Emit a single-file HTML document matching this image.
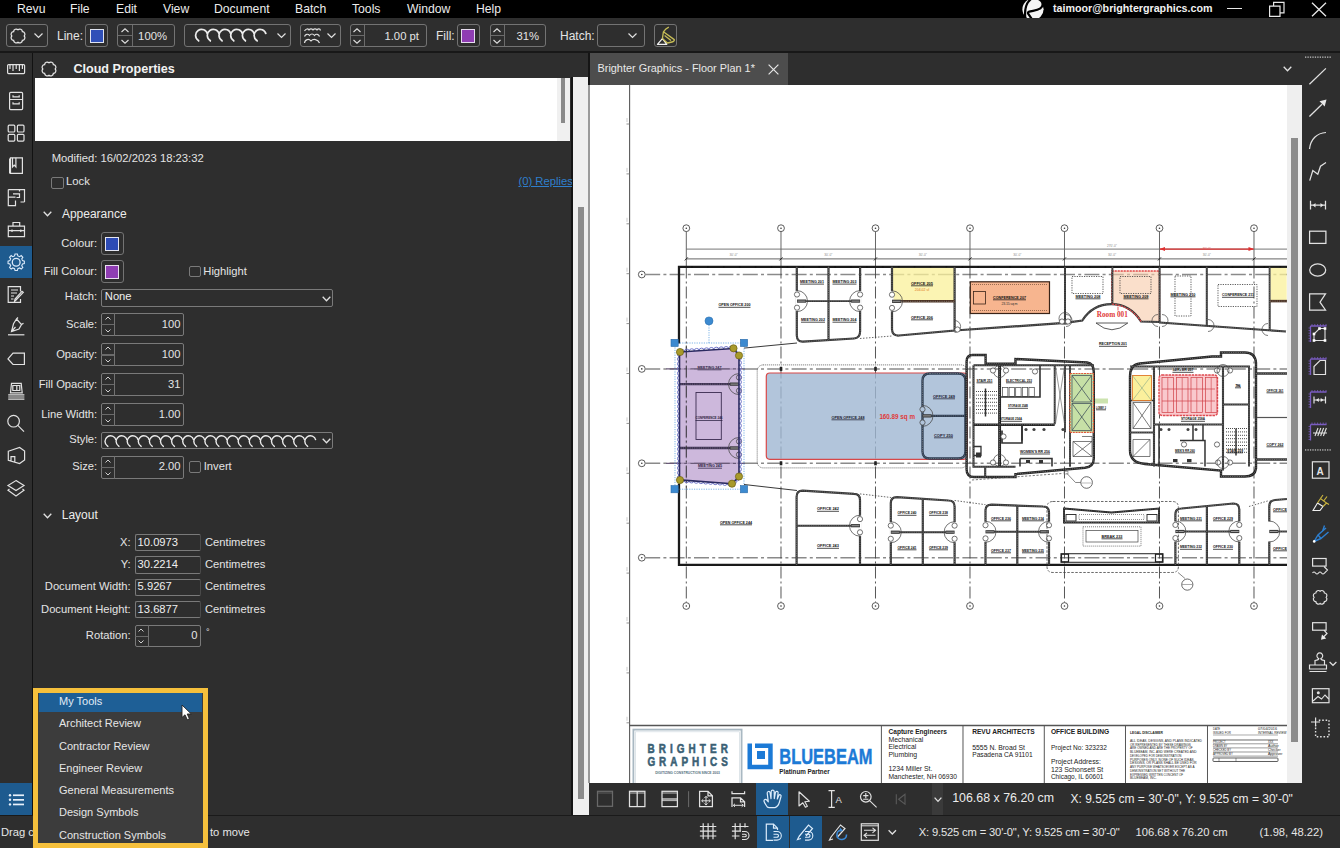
<!DOCTYPE html>
<html><head><meta charset="utf-8">
<style>
*{margin:0;padding:0;box-sizing:border-box}
html,body{width:1340px;height:848px;overflow:hidden;background:#2e2e2e;font-family:"Liberation Sans",sans-serif;color:#e6e6e6}
.a{position:absolute}
.t{position:absolute;white-space:nowrap;line-height:1}
svg{position:absolute;overflow:visible}
.btn{position:absolute;border:1.4px solid #737373;border-radius:3px}
.fld{position:absolute;border:1.4px solid #7a7a7a;border-radius:2px}
.cb{position:absolute;width:12px;height:12px;border:1.3px solid #7a7a7a;border-radius:2px}
.lbl{position:absolute;white-space:nowrap;line-height:1;font-size:11.3px;color:#e4e4e4;text-align:right}
</style></head><body>
<!-- menu bar -->
<div class="a" style="left:0;top:0;width:1340px;height:18px;background:#000"></div>
<div id="menu" style="font-size:12.2px;color:#ececec">
<span class="t" style="left:17px;top:3px">Revu</span>
<span class="t" style="left:70px;top:3px">File</span>
<span class="t" style="left:116px;top:3px">Edit</span>
<span class="t" style="left:163px;top:3px">View</span>
<span class="t" style="left:214px;top:3px">Document</span>
<span class="t" style="left:295px;top:3px">Batch</span>
<span class="t" style="left:352px;top:3px">Tools</span>
<span class="t" style="left:407px;top:3px">Window</span>
<span class="t" style="left:476px;top:3px">Help</span>
</div>
<svg style="left:1018px;top:0px" width="32" height="20" viewBox="0 0 32 20"><clipPath id="lc"><rect x="0" y="0" width="32" height="18.5"/></clipPath><g clip-path="url(#lc)"><circle cx="15" cy="9.3" r="10.6" fill="#f4f4f4"/><path d="M13 -1 C8 3 6 9 7.5 19.5" fill="none" stroke="#000" stroke-width="2.2"/><path d="M24.5 2.5 C25.5 8 21 10 15 10.8 C11 11.3 9.5 12 10 13.5 L14.5 20" fill="none" stroke="#000" stroke-width="2.2"/></g></svg>
<span class="t" style="left:1053px;top:3.2px;font-size:10.7px;font-weight:bold;color:#f0f0f0">taimoor@brightergraphics.com</span>
<div class="a" style="left:1227px;top:8.2px;width:15px;height:1.3px;background:#e8e8e8"></div>
<svg style="left:1268px;top:0px" width="18" height="18" viewBox="0 0 18 18"><path d="M1.6 6.2 H12 V16.4 H1.6 Z M5.6 6.2 V2.4 H16 V12.8 H12" fill="none" stroke="#e8e8e8" stroke-width="1.2"/></svg>
<svg style="left:1311px;top:2px" width="16" height="15" viewBox="0 0 16 15"><path d="M1 0.8 L15 14.2 M15 0.8 L1 14.2" fill="none" stroke="#e8e8e8" stroke-width="1.3"/></svg>
<!-- toolbar -->
<div class="a" style="left:0;top:18px;width:1340px;height:33px;background:#2e2e2e"></div>
<div class="a" style="left:0;top:51px;width:1340px;height:2px;background:#181818"></div>
<div id="tb">
<div class="btn" style="left:6px;top:24px;width:42px;height:23px"></div>
<svg style="left:9px;top:27px" width="18" height="18" viewBox="0 0 18 18"><path d="M9.00 2.80 A2.6 2.6 0 0 1 13.38 4.62 A2.6 2.6 0 0 1 15.20 9.00 A2.6 2.6 0 0 1 13.38 13.38 A2.6 2.6 0 0 1 9.00 15.20 A2.6 2.6 0 0 1 4.62 13.38 A2.6 2.6 0 0 1 2.80 9.00 A2.6 2.6 0 0 1 4.62 4.62 A2.6 2.6 0 0 1 9.00 2.80 Z" fill="none" stroke="#e8e8e8" stroke-width="1.2"/></svg>
<svg style="left:34px;top:33px" width="9" height="5" viewBox="0 0 9 5"><path d="M0.5 0.5 L4.5 4.5 L8.5 0.5" fill="none" stroke="#e0e0e0" stroke-width="1.2"/></svg>
<span class="t" style="left:57px;top:30px;font-size:12px;color:#e4e4e4">Line:</span>
<div class="btn" style="left:85px;top:24px;width:23px;height:23px"></div>
<div class="a" style="left:90px;top:29px;width:14px;height:14px;background:#2f4fb8;border:1.5px solid #dfe3f0"></div>
<div class="btn" style="left:117px;top:24px;width:58px;height:23px"></div>
<div class="a" style="left:132px;top:25px;width:1.3px;height:21px;background:#6b6b6b"></div>
<div class="a" style="left:118px;top:35px;width:14px;height:1.3px;background:#6b6b6b"></div>
<svg style="left:121px;top:28px" width="8" height="5" viewBox="0 0 8 5"><path d="M0.5 4 L4 0.8 L7.5 4" fill="none" stroke="#e0e0e0" stroke-width="1.1"/></svg>
<svg style="left:121px;top:38.5px" width="8" height="5" viewBox="0 0 8 5"><path d="M0.5 1 L4 4.2 L7.5 1" fill="none" stroke="#e0e0e0" stroke-width="1.1"/></svg>
<span class="t" style="right:1173px;top:30.5px;font-size:11.3px;color:#e4e4e4">100%</span>
<div class="btn" style="left:184px;top:24px;width:107px;height:23px"></div>
<svg style="left:195px;top:28px" width="72" height="14" viewBox="0 0 72 14"><path d="M4.32 13.30 Q3.42 13.00 3.42 12.49 A6.00 6.00 0 1 1 12.47 6.15 M16.02 13.30 Q15.12 13.00 15.12 12.49 A6.00 6.00 0 1 1 24.17 6.15 M27.72 13.30 Q26.82 13.00 26.82 12.49 A6.00 6.00 0 1 1 35.87 6.15 M39.42 13.30 Q38.52 13.00 38.52 12.49 A6.00 6.00 0 1 1 47.57 6.15 M51.12 13.30 Q50.22 13.00 50.22 12.49 A6.00 6.00 0 1 1 59.27 6.15 M62.82 13.30 Q61.92 13.00 61.92 12.49 A6.00 6.00 0 1 1 70.97 6.15 " fill="none" stroke="#ececec" stroke-width="1.7"/></svg>
<svg style="left:277px;top:33px" width="9" height="5" viewBox="0 0 9 5"><path d="M0.5 0.5 L4.5 4.5 L8.5 0.5" fill="none" stroke="#e0e0e0" stroke-width="1.2"/></svg>
<div class="btn" style="left:300px;top:24px;width:41px;height:23px"></div>
<svg style="left:303px;top:27px" width="18" height="17" viewBox="0 0 18 17"><path d="M1.5 4 C3 1.5 5 1.5 6 3 C7 1.5 9 1.5 10 3 C11 1.5 13 1.5 14 3 C15 1.5 17 1.5 17.5 3.5 M1.5 9.5 C2.5 7 5 6.5 6.5 8.5 C8 6.5 10 6.5 11.5 8.5 C13 6.5 15.5 7 16.5 9.5 M1.5 16 C2 12 6 11.5 8 14 C10 11.5 15 12 16.5 16" fill="none" stroke="#e0e0e0" stroke-width="1.2"/></svg>
<svg style="left:327px;top:33px" width="9" height="5" viewBox="0 0 9 5"><path d="M0.5 0.5 L4.5 4.5 L8.5 0.5" fill="none" stroke="#e0e0e0" stroke-width="1.2"/></svg>
<div class="btn" style="left:350px;top:24px;width:77px;height:23px"></div>
<div class="a" style="left:364px;top:25px;width:1.3px;height:21px;background:#6b6b6b"></div>
<div class="a" style="left:351px;top:35px;width:13px;height:1.3px;background:#6b6b6b"></div>
<svg style="left:353px;top:28px" width="8" height="5" viewBox="0 0 8 5"><path d="M0.5 4 L4 0.8 L7.5 4" fill="none" stroke="#e0e0e0" stroke-width="1.1"/></svg>
<svg style="left:353px;top:38.5px" width="8" height="5" viewBox="0 0 8 5"><path d="M0.5 1 L4 4.2 L7.5 1" fill="none" stroke="#e0e0e0" stroke-width="1.1"/></svg>
<span class="t" style="right:921px;top:30.5px;font-size:11.3px;color:#e4e4e4">1.00 pt</span>
<span class="t" style="left:436px;top:30px;font-size:12px;color:#e4e4e4">Fill:</span>
<div class="btn" style="left:457px;top:24px;width:23px;height:23px"></div>
<div class="a" style="left:461px;top:29px;width:14px;height:14px;background:#8f3db3;border:1.5px solid #e6dcef"></div>
<div class="btn" style="left:490px;top:24px;width:56px;height:23px"></div>
<div class="a" style="left:504px;top:25px;width:1.3px;height:21px;background:#6b6b6b"></div>
<div class="a" style="left:491px;top:35px;width:13px;height:1.3px;background:#6b6b6b"></div>
<svg style="left:493px;top:28px" width="8" height="5" viewBox="0 0 8 5"><path d="M0.5 4 L4 0.8 L7.5 4" fill="none" stroke="#e0e0e0" stroke-width="1.1"/></svg>
<svg style="left:493px;top:38.5px" width="8" height="5" viewBox="0 0 8 5"><path d="M0.5 1 L4 4.2 L7.5 1" fill="none" stroke="#e0e0e0" stroke-width="1.1"/></svg>
<span class="t" style="right:801px;top:30.5px;font-size:11.3px;color:#e4e4e4">31%</span>
<span class="t" style="left:560px;top:30px;font-size:12px;color:#e4e4e4">Hatch:</span>
<div class="btn" style="left:597px;top:24px;width:48px;height:23px"></div>
<svg style="left:628px;top:33px" width="9" height="5" viewBox="0 0 9 5"><path d="M0.5 0.5 L4.5 4.5 L8.5 0.5" fill="none" stroke="#e0e0e0" stroke-width="1.2"/></svg>
<div class="btn" style="left:654px;top:24px;width:23px;height:23px"></div>
<svg style="left:656px;top:25px" width="20" height="20" viewBox="0 0 20 20"><path d="M1.4 19.3 L6.4 13.6 L10.8 19.3 Z" fill="none" stroke="#f2f2f2" stroke-width="1.2" stroke-linejoin="round"/><path d="M6.4 13.6 L7.4 6.8 Q9.6 3.6 12.8 2.2 M7.4 6.8 L18.3 14.6 Q18.5 16.6 16 17 L11.4 18 L6.4 13.6 M8.6 10.6 L15 15.6" fill="none" stroke="#c7bd56" stroke-width="1.3" stroke-linejoin="round"/></svg>
</div>

<!-- left strip -->
<div class="a" style="left:0;top:53px;width:32px;height:763px;background:#2e2e2e"></div>
<div class="a" style="left:32px;top:53px;width:1px;height:763px;background:#121212"></div>
<div class="a" style="left:0;top:246px;width:32px;height:32px;background:#1e5b8f"></div>
<div class="a" style="left:0;top:783px;width:32px;height:32px;background:#1e5b8f"></div>
<svg style="left:0;top:0" width="32" height="848" viewBox="0 0 32 848">
<g fill="none" stroke="#e2e2e2" stroke-width="1.2">
<rect x="7.6" y="64.6" width="17" height="9" rx="1"/>
<path d="M10 64.6 V69 M13 64.6 V71 M16.2 64.6 V69 M19.4 64.6 V71 M22.4 64.6 V69"/>
<rect x="9.6" y="92.4" width="13" height="17.2" rx="1"/>
<path d="M9.6 99.5 H22.6 M13 95.3 V96.8 H19.2 V95.3 M13 102.3 V103.8 H19.2 V102.3"/>
<rect x="8.2" y="125.2" width="6.6" height="6.8" rx="1"/><rect x="17.4" y="125.2" width="6.6" height="6.8" rx="1"/>
<rect x="8.2" y="134.3" width="6.6" height="6.8" rx="1"/><rect x="17.4" y="134.3" width="6.6" height="6.8" rx="1"/>
<path d="M10.5 157.8 H22.4 V173.4 H10.5 Z M9.6 158.5 V173.4"/>
<path d="M12.5 157.8 V167 L14.2 165.2 L15.9 167 V157.8"/>
<path d="M8.3 189.6 H24.5 V202 M20.5 202 H24.5 M8.3 189.6 V205.7 H15.5 V200.5 M15.5 197.2 H8.3 M13 193.8 H19.5 V197.5 H16.5 M19.5 189.6 V191.5"/>
<path d="M8.3 226.2 H24.5 V236.6 H8.3 Z M8.3 230.6 H24.5 M13 226.2 V222.5 H19.7 V226.2 M12 229.5 V232 M20.8 229.5 V232"/>
<path d="M20.5 291.5 V286.6 H8.2 V302.3 H20.5 V299 M11 290 H18 M11 293 H17 M11 296 H14 M11 299 H13.5"/>
<path d="M23.3 292.3 L16 300 L14.5 301.5 L15 299 L22 291.3 Z"/>
<path d="M8 334.8 H24.4"/>
<path d="M16.5 319 L21.5 324.5 L19 329 L11.5 331.5 L13.5 323.8 Z M16.5 319 L18 317.5 M21.5 324.5 L23.5 323.2 M11.5 331.5 L15.5 327"/>
<path d="M8 358.9 L13 353.2 H24.4 V364.5 H13 Z"/>
<path d="M10.5 392.8 L11.5 383.4 H21.2 L22.2 392.8 Z M12.8 385.5 H19.8 V390.5 H12.8 Z M16.8 385.5 V390.5 M8.2 394.8 H24.4 M8.2 397 H24.4 M8.2 399.2 H24.4"/>
<circle cx="13.6" cy="421.2" r="5.8"/><path d="M17.8 425.4 L24 431.6"/>
<path d="M8.3 451.2 L19.6 447.5 L24.6 451 V460 L19.6 463.6 L8.3 460.2 Z M11 460.6 V456.7 H14.8 V461.6"/>
<path d="M16 480.6 L24 485.6 L16 490.6 L8 485.6 Z M9.5 489 L8 490.2 L16 495.9 L24 490.2 L22.5 489"/>
</g>
<g fill="none" stroke="#dbeafa" stroke-width="1.3">
<path d="M14.8 254 H17.6 L18.2 256.2 L20.3 257.1 L22.2 255.8 L24.1 257.8 L22.8 259.7 L23.7 261.8 L25.9 262.4 V265.2 L23.7 265.8 L22.8 267.9 L24.1 269.8 L22.2 271.8 L20.3 270.5 L18.2 271.4 L17.6 273.6 H14.8 L14.2 271.4 L12.1 270.5 L10.2 271.8 L8.3 269.8 L9.6 267.9 L8.7 265.8 L6.5 265.2 V262.4 L8.7 261.8 L9.6 259.7 L8.3 257.8 L10.2 255.8 L12.1 257.1 L14.2 256.2 Z" transform="translate(16.2,262.3) scale(0.84) translate(-16.2,-263.8)"/>
<circle cx="16.2" cy="262.3" r="3.9"/>
</g>
<g fill="#e8f1fb"><circle cx="10" cy="795.2" r="1.2"/><circle cx="10" cy="799.8" r="1.2"/><circle cx="10" cy="804.4" r="1.2"/><rect x="13" y="794.4" width="11" height="1.7"/><rect x="13" y="799" width="11" height="1.7"/><rect x="13" y="803.6" width="11" height="1.7"/></g>
</svg>

<!-- panel -->
<div class="a" style="left:33px;top:53px;width:539px;height:763px;background:#2e2e2e"></div>
<div class="a" style="left:571px;top:77px;width:2px;height:739px;background:#151515"></div>

<div id="panel">
<svg style="left:39.5px;top:59.5px" width="18" height="18" viewBox="0 0 18 18"><path d="M9.00 2.80 A2.6 2.6 0 0 1 13.38 4.62 A2.6 2.6 0 0 1 15.20 9.00 A2.6 2.6 0 0 1 13.38 13.38 A2.6 2.6 0 0 1 9.00 15.20 A2.6 2.6 0 0 1 4.62 13.38 A2.6 2.6 0 0 1 2.80 9.00 A2.6 2.6 0 0 1 4.62 4.62 A2.6 2.6 0 0 1 9.00 2.80 Z" fill="none" stroke="#e8e8e8" stroke-width="1.2"/></svg>
<span class="t" style="left:73.4px;top:62.93px;font-size:12.6px;color:#f2f2f2;font-weight:bold;">Cloud Properties</span>
<div class="a" style="left:35px;top:77.5px;width:522px;height:63.5px;background:#fff"></div>
<div class="a" style="left:557px;top:77.5px;width:13px;height:63.5px;background:#f0f0f0"></div>
<div class="a" style="left:561.3px;top:77.7px;width:4px;height:45.2px;background:#8a8a8a"></div>
<span class="t" style="left:51.7px;top:153.08px;font-size:11.25px;color:#e4e4e4;">Modified: 16/02/2023 18:23:32</span>
<div class="cb" style="left:51.2px;top:177px;width:12.50px;height:11.60px;"></div>
<span class="t" style="left:66px;top:176.08px;font-size:11.25px;color:#e4e4e4;">Lock</span>
<div class="a" style="left:515px;top:170px;width:57px;height:20px;overflow:hidden"><span class="t" style="left:3.4px;top:6.28px;font-size:11.25px;color:#2f7fcc;text-decoration:underline">(0) Replies</span>
</div>
<svg style="left:42.8px;top:211px" width="9" height="6" viewBox="0 0 9 6"><path d="M0.7 0.7 L4.5 4.8 L8.3 0.7" fill="none" stroke="#e0e0e0" stroke-width="1.3"/></svg>
<span class="t" style="left:61.9px;top:207.94px;font-size:12px;color:#ececec;">Appearance</span>
<span class="t" style="right:1242.80px;top:237.92px;font-size:11.2px;color:#e4e4e4;">Colour:</span>
<div class="btn" style="left:100.7px;top:232.1px;width:23.00px;height:23.00px;"></div>
<div class="a" style="left:105.3px;top:237px;width:13.7px;height:13.7px;background:#2d4bb5;border:1.4px solid #e4e6f2"></div>
<span class="t" style="right:1242.80px;top:265.62px;font-size:11.2px;color:#e4e4e4;">Fill Colour:</span>
<div class="btn" style="left:100.7px;top:260px;width:23.00px;height:23.00px;"></div>
<div class="a" style="left:105.3px;top:265px;width:13.7px;height:13.7px;background:#8f3db3;border:1.4px solid #eadff0"></div>
<div class="cb" style="left:189px;top:265.8px;width:11.80px;height:11.50px;"></div>
<span class="t" style="left:203.3px;top:265.52px;font-size:11.2px;color:#e4e4e4;">Highlight</span>
<span class="t" style="right:1242.80px;top:291.12px;font-size:11.2px;color:#e4e4e4;">Hatch:</span>
<div class="fld" style="left:101.25px;top:289.25px;width:231.25px;height:17.50px;"></div>
<span class="t" style="left:104.8px;top:291.12px;font-size:11.2px;color:#f0f0f0;">None</span>
<svg style="left:321.5px;top:295.5px" width="9" height="6" viewBox="0 0 9 6"><path d="M0.7 0.7 L4.5 4.8 L8.3 0.7" fill="none" stroke="#e0e0e0" stroke-width="1.3"/></svg>
<span class="t" style="right:1242.80px;top:318.52px;font-size:11.2px;color:#e4e4e4;">Scale:</span>
<div class="fld" style="left:101.25px;top:312.5px;width:82.50px;height:23.25px;"></div>
<div class="a" style="left:113.75px;top:312.5px;width:1.2px;height:23.25px;background:#727272"></div>
<div class="a" style="left:101.25px;top:324.1px;width:12.5px;height:1.2px;background:#6a6a6a"></div>
<svg style="left:104.5px;top:315.5px" width="6" height="4" viewBox="0 0 6 4"><path d="M0.5 3.5 L3 1 L5.5 3.5" fill="none" stroke="#cfcfcf" stroke-width="1"/></svg>
<svg style="left:104.5px;top:328.75px" width="6" height="4" viewBox="0 0 6 4"><path d="M0.5 0.5 L3 3 L5.5 0.5" fill="none" stroke="#cfcfcf" stroke-width="1"/></svg>
<span class="t" style="right:1159.50px;top:318.52px;font-size:11.2px;color:#e4e4e4;">100</span>
<span class="t" style="right:1242.80px;top:348.52px;font-size:11.2px;color:#e4e4e4;">Opacity:</span>
<div class="fld" style="left:101.25px;top:343px;width:82.50px;height:22.75px;"></div>
<div class="a" style="left:113.75px;top:343px;width:1.2px;height:22.75px;background:#727272"></div>
<div class="a" style="left:101.25px;top:354.4px;width:12.5px;height:1.2px;background:#6a6a6a"></div>
<svg style="left:104.5px;top:346px" width="6" height="4" viewBox="0 0 6 4"><path d="M0.5 3.5 L3 1 L5.5 3.5" fill="none" stroke="#cfcfcf" stroke-width="1"/></svg>
<svg style="left:104.5px;top:358.75px" width="6" height="4" viewBox="0 0 6 4"><path d="M0.5 0.5 L3 3 L5.5 0.5" fill="none" stroke="#cfcfcf" stroke-width="1"/></svg>
<span class="t" style="right:1159.50px;top:348.52px;font-size:11.2px;color:#e4e4e4;">100</span>
<span class="t" style="right:1242.80px;top:378.52px;font-size:11.2px;color:#e4e4e4;">Fill Opacity:</span>
<div class="fld" style="left:101.25px;top:372.5px;width:82.50px;height:23.00px;"></div>
<div class="a" style="left:113.75px;top:372.5px;width:1.2px;height:23.0px;background:#727272"></div>
<div class="a" style="left:101.25px;top:384.0px;width:12.5px;height:1.2px;background:#6a6a6a"></div>
<svg style="left:104.5px;top:375.5px" width="6" height="4" viewBox="0 0 6 4"><path d="M0.5 3.5 L3 1 L5.5 3.5" fill="none" stroke="#cfcfcf" stroke-width="1"/></svg>
<svg style="left:104.5px;top:388.5px" width="6" height="4" viewBox="0 0 6 4"><path d="M0.5 0.5 L3 3 L5.5 0.5" fill="none" stroke="#cfcfcf" stroke-width="1"/></svg>
<span class="t" style="right:1159.50px;top:378.52px;font-size:11.2px;color:#e4e4e4;">31</span>
<span class="t" style="right:1242.80px;top:408.52px;font-size:11.2px;color:#e4e4e4;">Line Width:</span>
<div class="fld" style="left:101.25px;top:402.5px;width:82.50px;height:23.00px;"></div>
<div class="a" style="left:113.75px;top:402.5px;width:1.2px;height:23.0px;background:#727272"></div>
<div class="a" style="left:101.25px;top:414.0px;width:12.5px;height:1.2px;background:#6a6a6a"></div>
<svg style="left:104.5px;top:405.5px" width="6" height="4" viewBox="0 0 6 4"><path d="M0.5 3.5 L3 1 L5.5 3.5" fill="none" stroke="#cfcfcf" stroke-width="1"/></svg>
<svg style="left:104.5px;top:418.5px" width="6" height="4" viewBox="0 0 6 4"><path d="M0.5 0.5 L3 3 L5.5 0.5" fill="none" stroke="#cfcfcf" stroke-width="1"/></svg>
<span class="t" style="right:1159.50px;top:408.52px;font-size:11.2px;color:#e4e4e4;">1.00</span>
<span class="t" style="right:1242.80px;top:434.27px;font-size:11.2px;color:#e4e4e4;">Style:</span>
<div class="fld" style="left:101.25px;top:432px;width:231.25px;height:16.75px;"></div>
<svg style="left:104px;top:434.5px" width="215" height="12" viewBox="0 0 215 12"><path d="M4.41 11.60 Q3.61 11.30 3.61 11.06 A5.55 5.55 0 1 1 11.98 5.20 M15.51 11.60 Q14.71 11.30 14.71 11.06 A5.55 5.55 0 1 1 23.08 5.20 M26.61 11.60 Q25.81 11.30 25.81 11.06 A5.55 5.55 0 1 1 34.18 5.20 M37.71 11.60 Q36.91 11.30 36.91 11.06 A5.55 5.55 0 1 1 45.28 5.20 M48.81 11.60 Q48.01 11.30 48.01 11.06 A5.55 5.55 0 1 1 56.38 5.20 M59.91 11.60 Q59.11 11.30 59.11 11.06 A5.55 5.55 0 1 1 67.48 5.20 M71.01 11.60 Q70.21 11.30 70.21 11.06 A5.55 5.55 0 1 1 78.58 5.20 M82.11 11.60 Q81.31 11.30 81.31 11.06 A5.55 5.55 0 1 1 89.68 5.20 M93.21 11.60 Q92.41 11.30 92.41 11.06 A5.55 5.55 0 1 1 100.78 5.20 M104.31 11.60 Q103.51 11.30 103.51 11.06 A5.55 5.55 0 1 1 111.88 5.20 M115.41 11.60 Q114.61 11.30 114.61 11.06 A5.55 5.55 0 1 1 122.98 5.20 M126.51 11.60 Q125.71 11.30 125.71 11.06 A5.55 5.55 0 1 1 134.08 5.20 M137.61 11.60 Q136.81 11.30 136.81 11.06 A5.55 5.55 0 1 1 145.18 5.20 M148.71 11.60 Q147.91 11.30 147.91 11.06 A5.55 5.55 0 1 1 156.28 5.20 M159.81 11.60 Q159.01 11.30 159.01 11.06 A5.55 5.55 0 1 1 167.38 5.20 M170.91 11.60 Q170.11 11.30 170.11 11.06 A5.55 5.55 0 1 1 178.48 5.20 M182.01 11.60 Q181.21 11.30 181.21 11.06 A5.55 5.55 0 1 1 189.58 5.20 M193.11 11.60 Q192.31 11.30 192.31 11.06 A5.55 5.55 0 1 1 200.68 5.20 M204.21 11.60 Q203.41 11.30 203.41 11.06 A5.55 5.55 0 1 1 211.78 5.20 " fill="none" stroke="#ececec" stroke-width="1.4"/></svg>
<svg style="left:321.5px;top:438px" width="9" height="6" viewBox="0 0 9 6"><path d="M0.7 0.7 L4.5 4.8 L8.3 0.7" fill="none" stroke="#e0e0e0" stroke-width="1.3"/></svg>
<span class="t" style="right:1242.80px;top:461.02px;font-size:11.2px;color:#e4e4e4;">Size:</span>
<div class="fld" style="left:101.25px;top:455.5px;width:82.50px;height:23.25px;"></div>
<div class="a" style="left:113.75px;top:455.5px;width:1.2px;height:23.25px;background:#727272"></div>
<div class="a" style="left:101.25px;top:467.1px;width:12.5px;height:1.2px;background:#6a6a6a"></div>
<svg style="left:104.5px;top:458.5px" width="6" height="4" viewBox="0 0 6 4"><path d="M0.5 3.5 L3 1 L5.5 3.5" fill="none" stroke="#cfcfcf" stroke-width="1"/></svg>
<svg style="left:104.5px;top:471.75px" width="6" height="4" viewBox="0 0 6 4"><path d="M0.5 0.5 L3 3 L5.5 0.5" fill="none" stroke="#cfcfcf" stroke-width="1"/></svg>
<span class="t" style="right:1159.50px;top:461.02px;font-size:11.2px;color:#e4e4e4;">2.00</span>
<div class="cb" style="left:188.75px;top:461.25px;width:12.00px;height:11.75px;"></div>
<span class="t" style="left:203.75px;top:461.02px;font-size:11.2px;color:#e4e4e4;">Invert</span>
<svg style="left:42.5px;top:513px" width="9" height="6" viewBox="0 0 9 6"><path d="M0.7 0.7 L4.5 4.8 L8.3 0.7" fill="none" stroke="#e0e0e0" stroke-width="1.3"/></svg>
<span class="t" style="left:61.75px;top:509.34px;font-size:12px;color:#ececec;">Layout</span>
<span class="t" style="right:1209.40px;top:536.77px;font-size:11.2px;color:#e4e4e4;">X:</span>
<div class="fld" style="left:135px;top:533.75px;width:65.75px;height:17.50px;border-right-color:#4a4a4a"></div>
<span class="t" style="left:137.6px;top:536.77px;font-size:11.2px;color:#f0f0f0;">10.0973</span>
<span class="t" style="left:205px;top:536.77px;font-size:11.2px;color:#e4e4e4;">Centimetres</span>
<span class="t" style="right:1209.40px;top:559.27px;font-size:11.2px;color:#e4e4e4;">Y:</span>
<div class="fld" style="left:135px;top:556.25px;width:65.75px;height:17.50px;border-right-color:#4a4a4a"></div>
<span class="t" style="left:137.6px;top:559.27px;font-size:11.2px;color:#f0f0f0;">30.2214</span>
<span class="t" style="left:205px;top:559.27px;font-size:11.2px;color:#e4e4e4;">Centimetres</span>
<span class="t" style="right:1209.40px;top:581.27px;font-size:11.2px;color:#e4e4e4;">Document Width:</span>
<div class="fld" style="left:135px;top:578.75px;width:65.75px;height:17.00px;border-right-color:#4a4a4a"></div>
<span class="t" style="left:137.6px;top:581.27px;font-size:11.2px;color:#f0f0f0;">5.9267</span>
<span class="t" style="left:205px;top:581.27px;font-size:11.2px;color:#e4e4e4;">Centimetres</span>
<span class="t" style="right:1209.40px;top:603.52px;font-size:11.2px;color:#e4e4e4;">Document Height:</span>
<div class="fld" style="left:135px;top:601.25px;width:65.75px;height:17.00px;border-right-color:#4a4a4a"></div>
<span class="t" style="left:137.6px;top:603.52px;font-size:11.2px;color:#f0f0f0;">13.6877</span>
<span class="t" style="left:205px;top:603.52px;font-size:11.2px;color:#e4e4e4;">Centimetres</span>
<span class="t" style="right:1209.40px;top:629.77px;font-size:11.2px;color:#e4e4e4;">Rotation:</span>
<div class="fld" style="left:135px;top:624.5px;width:65.75px;height:22.50px;"></div>
<div class="a" style="left:147.5px;top:624.5px;width:1.2px;height:22.5px;background:#727272"></div>
<div class="a" style="left:135px;top:635.8px;width:12.5px;height:1.2px;background:#6a6a6a"></div>
<svg style="left:138.2px;top:627.5px" width="6" height="4" viewBox="0 0 6 4"><path d="M0.5 3.5 L3 1 L5.5 3.5" fill="none" stroke="#cfcfcf" stroke-width="1"/></svg>
<svg style="left:138.2px;top:640px" width="6" height="4" viewBox="0 0 6 4"><path d="M0.5 0.5 L3 3 L5.5 0.5" fill="none" stroke="#cfcfcf" stroke-width="1"/></svg>
<span class="t" style="right:1142.50px;top:629.77px;font-size:11.2px;color:#e4e4e4;">0</span>
<span class="t" style="left:206px;top:628.38px;font-size:9px;color:#e4e4e4;">°</span>
</div>
<!--endpanel-->
<!-- doc area -->
<div class="a" style="left:573px;top:53px;width:767px;height:763px;background:#2e2e2e"></div>
<!-- panel scrollbar -->
<div class="a" style="left:573px;top:77px;width:16px;height:738.5px;background:#efefef"></div>
<div class="a" style="left:588px;top:77px;width:1.5px;height:706px;background:#9a9a9a"></div>
<div class="a" style="left:577.8px;top:206.7px;width:6.3px;height:592.7px;background:#8c8c8c"></div>
<!-- tab -->
<div class="a" style="left:588px;top:53px;width:1.5px;height:31.5px;background:#151515"></div>
<div class="a" style="left:589.5px;top:53px;width:198.5px;height:31.5px;background:#4d4d4d"></div>
<span class="t" style="left:597.5px;top:63.2px;font-size:10.9px;color:#e8e8e8">Brighter Graphics - Floor Plan 1*</span>
<svg style="left:768px;top:63.5px" width="11" height="11" viewBox="0 0 11 11"><path d="M0.6 0.6 L10.4 10.4 M10.4 0.6 L0.6 10.4" fill="none" stroke="#e6e6e6" stroke-width="1.2"/></svg>
<svg style="left:1283px;top:66px" width="9" height="6" viewBox="0 0 9 6"><path d="M0.7 0.7 L4.5 4.8 L8.3 0.7" fill="none" stroke="#e0e0e0" stroke-width="1.3"/></svg>
<!-- page -->
<div class="a" style="left:590px;top:84.5px;width:696.6px;height:698.5px;background:#fff;overflow:hidden" id="page"></div>
<!--plan--><svg style="left:590px;top:84.5px" width="696.6" height="698.5" viewBox="590 84.5 696.6 698.5"><defs></defs><line x1="629.6" y1="84" x2="629.6" y2="784" stroke="#5a5a5a" stroke-width="1.1"/><line x1="626.5" y1="123.5" x2="629.6" y2="123.5" stroke="#777" stroke-width="0.8"/><line x1="627" y1="117.5" x2="627" y2="121.5" stroke="#aaa" stroke-width="0.6"/><line x1="626.5" y1="173.4" x2="629.6" y2="173.4" stroke="#777" stroke-width="0.8"/><line x1="627" y1="167.4" x2="627" y2="171.4" stroke="#aaa" stroke-width="0.6"/><line x1="626.5" y1="223.3" x2="629.6" y2="223.3" stroke="#777" stroke-width="0.8"/><line x1="627" y1="217.3" x2="627" y2="221.3" stroke="#aaa" stroke-width="0.6"/><line x1="626.5" y1="273.2" x2="629.6" y2="273.2" stroke="#777" stroke-width="0.8"/><line x1="627" y1="267.2" x2="627" y2="271.2" stroke="#aaa" stroke-width="0.6"/><line x1="626.5" y1="323.1" x2="629.6" y2="323.1" stroke="#777" stroke-width="0.8"/><line x1="627" y1="317.1" x2="627" y2="321.1" stroke="#aaa" stroke-width="0.6"/><line x1="626.5" y1="373.0" x2="629.6" y2="373.0" stroke="#777" stroke-width="0.8"/><line x1="627" y1="367.0" x2="627" y2="371.0" stroke="#aaa" stroke-width="0.6"/><line x1="626.5" y1="422.9" x2="629.6" y2="422.9" stroke="#777" stroke-width="0.8"/><line x1="627" y1="416.9" x2="627" y2="420.9" stroke="#aaa" stroke-width="0.6"/><line x1="626.5" y1="472.8" x2="629.6" y2="472.8" stroke="#777" stroke-width="0.8"/><line x1="627" y1="466.8" x2="627" y2="470.8" stroke="#aaa" stroke-width="0.6"/><line x1="626.5" y1="522.7" x2="629.6" y2="522.7" stroke="#777" stroke-width="0.8"/><line x1="627" y1="516.7" x2="627" y2="520.7" stroke="#aaa" stroke-width="0.6"/><line x1="626.5" y1="572.6" x2="629.6" y2="572.6" stroke="#777" stroke-width="0.8"/><line x1="627" y1="566.6" x2="627" y2="570.6" stroke="#aaa" stroke-width="0.6"/><line x1="626.5" y1="622.5" x2="629.6" y2="622.5" stroke="#777" stroke-width="0.8"/><line x1="627" y1="616.5" x2="627" y2="620.5" stroke="#aaa" stroke-width="0.6"/><line x1="626.5" y1="672.4" x2="629.6" y2="672.4" stroke="#777" stroke-width="0.8"/><line x1="627" y1="666.4" x2="627" y2="670.4" stroke="#aaa" stroke-width="0.6"/><line x1="626.5" y1="722.3" x2="629.6" y2="722.3" stroke="#777" stroke-width="0.8"/><line x1="627" y1="716.3" x2="627" y2="720.3" stroke="#aaa" stroke-width="0.6"/><circle cx="641.8" cy="274" r="3.4" fill="#fff" stroke="#333" stroke-width="0.8"/><circle cx="641.8" cy="274" r="0.8" fill="#333"/><line x1="645.2" y1="274" x2="1287" y2="274" stroke="#8a8a8a" stroke-width="1.5" stroke-dasharray="15 3.2 3 3.2"/><circle cx="641.8" cy="368.4" r="3.4" fill="#fff" stroke="#333" stroke-width="0.8"/><circle cx="641.8" cy="368.4" r="0.8" fill="#333"/><line x1="645.2" y1="368.4" x2="1287" y2="368.4" stroke="#8a8a8a" stroke-width="1.5" stroke-dasharray="15 3.2 3 3.2"/><circle cx="641.8" cy="462.8" r="3.4" fill="#fff" stroke="#333" stroke-width="0.8"/><circle cx="641.8" cy="462.8" r="0.8" fill="#333"/><line x1="645.2" y1="462.8" x2="1287" y2="462.8" stroke="#8a8a8a" stroke-width="1.5" stroke-dasharray="15 3.2 3 3.2"/><circle cx="641.8" cy="557.2" r="3.4" fill="#fff" stroke="#333" stroke-width="0.8"/><circle cx="641.8" cy="557.2" r="0.8" fill="#333"/><line x1="645.2" y1="557.2" x2="1287" y2="557.2" stroke="#8a8a8a" stroke-width="1.5" stroke-dasharray="15 3.2 3 3.2"/><circle cx="686.3" cy="227.7" r="3.4" fill="#fff" stroke="#333" stroke-width="0.8"/><circle cx="686.3" cy="227.7" r="0.8" fill="#333"/><line x1="686.3" y1="231" x2="686.3" y2="266" stroke="#555" stroke-width="0.9"/><line x1="686.3" y1="266" x2="686.3" y2="602" stroke="#444" stroke-width="0.9" stroke-dasharray="12 3 2 3"/><circle cx="686.3" cy="605.5" r="3.4" fill="#fff" stroke="#333" stroke-width="0.8"/><circle cx="686.3" cy="605.5" r="0.8" fill="#333"/><circle cx="781" cy="227.7" r="3.4" fill="#fff" stroke="#333" stroke-width="0.8"/><circle cx="781" cy="227.7" r="0.8" fill="#333"/><line x1="781" y1="231" x2="781" y2="266" stroke="#555" stroke-width="0.9"/><line x1="781" y1="266" x2="781" y2="602" stroke="#444" stroke-width="0.9" stroke-dasharray="12 3 2 3"/><circle cx="781" cy="605.5" r="3.4" fill="#fff" stroke="#333" stroke-width="0.8"/><circle cx="781" cy="605.5" r="0.8" fill="#333"/><circle cx="875.5" cy="227.7" r="3.4" fill="#fff" stroke="#333" stroke-width="0.8"/><circle cx="875.5" cy="227.7" r="0.8" fill="#333"/><line x1="875.5" y1="231" x2="875.5" y2="266" stroke="#555" stroke-width="0.9"/><line x1="875.5" y1="266" x2="875.5" y2="602" stroke="#444" stroke-width="0.9" stroke-dasharray="12 3 2 3"/><circle cx="875.5" cy="605.5" r="3.4" fill="#fff" stroke="#333" stroke-width="0.8"/><circle cx="875.5" cy="605.5" r="0.8" fill="#333"/><circle cx="970" cy="227.7" r="3.4" fill="#fff" stroke="#333" stroke-width="0.8"/><circle cx="970" cy="227.7" r="0.8" fill="#333"/><line x1="970" y1="231" x2="970" y2="266" stroke="#555" stroke-width="0.9"/><line x1="970" y1="266" x2="970" y2="602" stroke="#444" stroke-width="0.9" stroke-dasharray="12 3 2 3"/><circle cx="970" cy="605.5" r="3.4" fill="#fff" stroke="#333" stroke-width="0.8"/><circle cx="970" cy="605.5" r="0.8" fill="#333"/><circle cx="1064.5" cy="227.7" r="3.4" fill="#fff" stroke="#333" stroke-width="0.8"/><circle cx="1064.5" cy="227.7" r="0.8" fill="#333"/><line x1="1064.5" y1="231" x2="1064.5" y2="266" stroke="#555" stroke-width="0.9"/><line x1="1064.5" y1="266" x2="1064.5" y2="602" stroke="#444" stroke-width="0.9" stroke-dasharray="12 3 2 3"/><circle cx="1064.5" cy="605.5" r="3.4" fill="#fff" stroke="#333" stroke-width="0.8"/><circle cx="1064.5" cy="605.5" r="0.8" fill="#333"/><circle cx="1159.5" cy="227.7" r="3.4" fill="#fff" stroke="#333" stroke-width="0.8"/><circle cx="1159.5" cy="227.7" r="0.8" fill="#333"/><line x1="1159.5" y1="231" x2="1159.5" y2="266" stroke="#555" stroke-width="0.9"/><line x1="1159.5" y1="266" x2="1159.5" y2="602" stroke="#444" stroke-width="0.9" stroke-dasharray="12 3 2 3"/><circle cx="1159.5" cy="605.5" r="3.4" fill="#fff" stroke="#333" stroke-width="0.8"/><circle cx="1159.5" cy="605.5" r="0.8" fill="#333"/><circle cx="1254" cy="227.7" r="3.4" fill="#fff" stroke="#333" stroke-width="0.8"/><circle cx="1254" cy="227.7" r="0.8" fill="#333"/><line x1="1254" y1="231" x2="1254" y2="266" stroke="#555" stroke-width="0.9"/><line x1="1254" y1="266" x2="1254" y2="602" stroke="#444" stroke-width="0.9" stroke-dasharray="12 3 2 3"/><circle cx="1254" cy="605.5" r="3.4" fill="#fff" stroke="#333" stroke-width="0.8"/><circle cx="1254" cy="605.5" r="0.8" fill="#333"/><line x1="686.3" y1="248.6" x2="1287" y2="248.6" stroke="#666" stroke-width="0.9"/><line x1="686.3" y1="258.4" x2="1287" y2="258.4" stroke="#555" stroke-width="0.9"/><line x1="1160" y1="248.6" x2="1253.5" y2="248.6" stroke="#e03030" stroke-width="1.1"/><path d="M1159.5 248.6 L1165 246.6 L1165 250.6Z M1254 248.6 L1248.5 246.6 L1248.5 250.6Z" fill="#e03030"/><text x="733.65" y="255.6" font-size="3.2" fill="#888" text-anchor="middle" font-family="Liberation Sans">30'-0"</text><text x="828.25" y="255.6" font-size="3.2" fill="#888" text-anchor="middle" font-family="Liberation Sans">30'-0"</text><text x="922.75" y="255.6" font-size="3.2" fill="#888" text-anchor="middle" font-family="Liberation Sans">30'-0"</text><text x="1017.25" y="255.6" font-size="3.2" fill="#888" text-anchor="middle" font-family="Liberation Sans">30'-0"</text><text x="1112.0" y="255.6" font-size="3.2" fill="#888" text-anchor="middle" font-family="Liberation Sans">30'-0"</text><text x="1206.75" y="255.6" font-size="3.2" fill="#888" text-anchor="middle" font-family="Liberation Sans">30'-0"</text><text x="1112" y="246.2" font-size="3.2" fill="#888" text-anchor="middle" font-family="Liberation Sans">270'-0"</text><text x="1206.7" y="250" font-size="3.2" fill="#e05050" text-anchor="middle" font-family="Liberation Sans">30'-0"</text><line x1="684.8" y1="259.9" x2="687.8" y2="256.9" stroke="#222" stroke-width="1"/><line x1="779.5" y1="259.9" x2="782.5" y2="256.9" stroke="#222" stroke-width="1"/><line x1="874.0" y1="259.9" x2="877.0" y2="256.9" stroke="#222" stroke-width="1"/><line x1="968.5" y1="259.9" x2="971.5" y2="256.9" stroke="#222" stroke-width="1"/><line x1="1063.0" y1="259.9" x2="1066.0" y2="256.9" stroke="#222" stroke-width="1"/><line x1="1158.0" y1="259.9" x2="1161.0" y2="256.9" stroke="#222" stroke-width="1"/><line x1="1252.5" y1="259.9" x2="1255.5" y2="256.9" stroke="#222" stroke-width="1"/><path d="M679 343 V266.3 H1287" fill="none" stroke="#1a1a1a" stroke-width="2.3"/><path d="M679 483 V564.3 H1287" fill="none" stroke="#1a1a1a" stroke-width="2.3"/><circle cx="692.0" cy="266.3" r="0.9" fill="#111"/><circle cx="707.9" cy="266.3" r="0.9" fill="#111"/><circle cx="723.8" cy="266.3" r="0.9" fill="#111"/><circle cx="739.7" cy="266.3" r="0.9" fill="#111"/><circle cx="755.6" cy="266.3" r="0.9" fill="#111"/><circle cx="771.5" cy="266.3" r="0.9" fill="#111"/><circle cx="787.4" cy="266.3" r="0.9" fill="#111"/><circle cx="803.3" cy="266.3" r="0.9" fill="#111"/><circle cx="819.2" cy="266.3" r="0.9" fill="#111"/><circle cx="835.1" cy="266.3" r="0.9" fill="#111"/><circle cx="851.0" cy="266.3" r="0.9" fill="#111"/><circle cx="866.9" cy="266.3" r="0.9" fill="#111"/><circle cx="882.8" cy="266.3" r="0.9" fill="#111"/><circle cx="898.7" cy="266.3" r="0.9" fill="#111"/><circle cx="914.6" cy="266.3" r="0.9" fill="#111"/><circle cx="930.5" cy="266.3" r="0.9" fill="#111"/><circle cx="946.4" cy="266.3" r="0.9" fill="#111"/><circle cx="962.3" cy="266.3" r="0.9" fill="#111"/><circle cx="978.2" cy="266.3" r="0.9" fill="#111"/><circle cx="994.1" cy="266.3" r="0.9" fill="#111"/><circle cx="1010.0" cy="266.3" r="0.9" fill="#111"/><circle cx="1025.9" cy="266.3" r="0.9" fill="#111"/><circle cx="1041.8" cy="266.3" r="0.9" fill="#111"/><circle cx="1057.7" cy="266.3" r="0.9" fill="#111"/><circle cx="1073.6" cy="266.3" r="0.9" fill="#111"/><circle cx="1089.5" cy="266.3" r="0.9" fill="#111"/><circle cx="1105.4" cy="266.3" r="0.9" fill="#111"/><circle cx="1121.3" cy="266.3" r="0.9" fill="#111"/><circle cx="1137.2" cy="266.3" r="0.9" fill="#111"/><circle cx="1153.1" cy="266.3" r="0.9" fill="#111"/><circle cx="1169.0" cy="266.3" r="0.9" fill="#111"/><circle cx="1184.9" cy="266.3" r="0.9" fill="#111"/><circle cx="1200.8" cy="266.3" r="0.9" fill="#111"/><circle cx="1216.7" cy="266.3" r="0.9" fill="#111"/><circle cx="1232.6" cy="266.3" r="0.9" fill="#111"/><circle cx="1248.5" cy="266.3" r="0.9" fill="#111"/><circle cx="1264.4" cy="266.3" r="0.9" fill="#111"/><circle cx="1280.3" cy="266.3" r="0.9" fill="#111"/><path d="M744 347.6 L797 342.5" stroke="#222" stroke-width="0.9"/><path d="M860 338 L892 335.5" stroke="#444" stroke-width="0.8" stroke-dasharray="1.5 1.5"/><path d="M744 484 L797 490" stroke="#222" stroke-width="0.9"/><path d="M860 493.4 L891 497 M954.6 500 L985.5 504.2 M1249 506 L1269.3 500" stroke="#444" stroke-width="0.8" stroke-dasharray="1.5 1.5"/><path d="M796.8 266.3 V335 Q797 341.5 803 341.2 L854 338 Q860 337.5 860.1 331 V266.3" fill="none" stroke="#333" stroke-width="2.20" /><path d="M796.8 266.3 V335 Q797 341.5 803 341.2 L854 338 Q860 337.5 860.1 331 V266.3" fill="none" stroke="#9a9a9a" stroke-width="0.61" stroke-dasharray="0.9 0.9" /><path d="M828.5 266.3 V339.5" fill="none" stroke="#333" stroke-width="2.20" /><path d="M828.5 266.3 V339.5" fill="none" stroke="#9a9a9a" stroke-width="0.61" stroke-dasharray="0.9 0.9" /><path d="M796.8 300.6 H860.1" fill="none" stroke="#333" stroke-width="1.90" /><path d="M796.8 300.6 H860.1" fill="none" stroke="#9a9a9a" stroke-width="0.51" stroke-dasharray="0.9 0.9" /><rect x="795.3" y="290.6" width="3.4" height="20.0" fill="#fff"/><rect x="797.0" y="299.0" width="9" height="3.2" fill="#3a3a3a"/><rect x="797.6" y="300.1" width="7.8" height="1" fill="#9a9a9a"/><path d="M797 290.1 A10.5 10.5 0 0 1 797 311.1" fill="none" stroke="#444" stroke-width="0.75"/><rect x="858.4" y="290.6" width="3.4" height="20.0" fill="#fff"/><rect x="851.1" y="299.0" width="9" height="3.2" fill="#3a3a3a"/><rect x="851.7" y="300.1" width="7.8" height="1" fill="#9a9a9a"/><path d="M860.1 290.1 A10.5 10.5 0 0 0 860.1 311.1" fill="none" stroke="#444" stroke-width="0.75"/><circle cx="797" cy="294" r="2.6" fill="#fff" stroke="#444" stroke-width="0.75"/><circle cx="797" cy="307.2" r="2.6" fill="#fff" stroke="#444" stroke-width="0.75"/><circle cx="860.1" cy="294" r="2.6" fill="#fff" stroke="#444" stroke-width="0.75"/><circle cx="860.1" cy="307.2" r="2.6" fill="#fff" stroke="#444" stroke-width="0.75"/><text x="812.0" y="282.6" font-size="4" font-weight="bold" fill="#111" text-anchor="middle" font-family="Liberation Sans" textLength="24.0" lengthAdjust="spacingAndGlyphs">MEETING  201</text><line x1="800.0" y1="283.6" x2="824.0" y2="283.6" stroke="#111" stroke-width="0.75"/><text x="844.5" y="282.6" font-size="4" font-weight="bold" fill="#111" text-anchor="middle" font-family="Liberation Sans" textLength="24.0" lengthAdjust="spacingAndGlyphs">MEETING  203</text><line x1="832.5" y1="283.6" x2="856.5" y2="283.6" stroke="#111" stroke-width="0.75"/><text x="813.0" y="320.7" font-size="4" font-weight="bold" fill="#111" text-anchor="middle" font-family="Liberation Sans" textLength="24.0" lengthAdjust="spacingAndGlyphs">MEETING  202</text><line x1="801.0" y1="321.7" x2="825.0" y2="321.7" stroke="#111" stroke-width="0.75"/><text x="844.5" y="320.7" font-size="4" font-weight="bold" fill="#111" text-anchor="middle" font-family="Liberation Sans" textLength="24.0" lengthAdjust="spacingAndGlyphs">MEETING  204</text><line x1="832.5" y1="321.7" x2="856.5" y2="321.7" stroke="#111" stroke-width="0.75"/><rect x="892" y="267.4" width="62.6" height="33.4" fill="#faf09a" opacity="0.75"/><path d="M892 266.3 V329 Q892.5 335.5 899 335 L954.6 330 V266.3" fill="none" stroke="#333" stroke-width="2.20" /><path d="M892 266.3 V329 Q892.5 335.5 899 335 L954.6 330 V266.3" fill="none" stroke="#9a9a9a" stroke-width="0.61" stroke-dasharray="0.9 0.9" /><path d="M892 300.8 H954.6" fill="none" stroke="#4a3020" stroke-width="2.50" /><path d="M892 300.8 H954.6" fill="none" stroke="#9a9a9a" stroke-width="0.70" stroke-dasharray="0.9 0.9" /><rect x="890.3" y="290.8" width="3.4" height="20.0" fill="#fff"/><rect x="892.0" y="299.2" width="9" height="3.2" fill="#3a3a3a"/><rect x="892.6" y="300.3" width="7.8" height="1" fill="#9a9a9a"/><path d="M892 290.3 A10.5 10.5 0 0 1 892 311.3" fill="none" stroke="#444" stroke-width="0.75"/><circle cx="892" cy="294.2" r="2.6" fill="#fff" stroke="#444" stroke-width="0.75"/><circle cx="892" cy="307.4" r="2.6" fill="#fff" stroke="#444" stroke-width="0.75"/><text x="922.0" y="284.3" font-size="4" font-weight="bold" fill="#111" text-anchor="middle" font-family="Liberation Sans" textLength="22.0" lengthAdjust="spacingAndGlyphs">OFFICE  205</text><line x1="911.0" y1="285.3" x2="933.0" y2="285.3" stroke="#111" stroke-width="0.75"/><text x="922.0" y="318.3" font-size="4" font-weight="bold" fill="#111" text-anchor="middle" font-family="Liberation Sans" textLength="22.0" lengthAdjust="spacingAndGlyphs">OFFICE  206</text><line x1="911.0" y1="319.3" x2="933.0" y2="319.3" stroke="#111" stroke-width="0.75"/><text x="922" y="290.5" font-size="3.5" fill="#e07020" text-anchor="middle" font-family="Liberation Sans">204.02 sf</text><rect x="970.3" y="281.3" width="79.2" height="31.7" fill="#f5a070" fill-opacity="0.78" stroke="#3a2418" stroke-width="1.2"/><rect x="973.5" y="291" width="12" height="12.5" fill="none" stroke="#3a2418" stroke-width="0.8"/><line x1="972" y1="284" x2="1048" y2="284" stroke="#5a3a28" stroke-width="0.6" stroke-dasharray="1 1"/><line x1="972" y1="310" x2="1048" y2="310" stroke="#5a3a28" stroke-width="0.6" stroke-dasharray="1 1"/><text x="1009.5" y="298.3" font-size="4" font-weight="bold" fill="#111" text-anchor="middle" font-family="Liberation Sans" textLength="33.0" lengthAdjust="spacingAndGlyphs">CONFERENCE  207</text><line x1="993.0" y1="299.3" x2="1026.0" y2="299.3" stroke="#111" stroke-width="0.75"/><text x="1009.5" y="305" font-size="3.6" fill="#333" text-anchor="middle" font-family="Liberation Sans" textLength="16">23.15 sq m</text><path d="M954.6 330 L1065 322.4" fill="none" stroke="#333" stroke-width="2.20" /><path d="M954.6 330 L1065 322.4" fill="none" stroke="#9a9a9a" stroke-width="0.61" stroke-dasharray="0.9 0.9" /><path d="M1065 266.3 V322.4" fill="none" stroke="#333" stroke-width="2.00" /><path d="M1065 266.3 V322.4" fill="none" stroke="#9a9a9a" stroke-width="0.54" stroke-dasharray="0.9 0.9" /><rect x="1072" y="276" width="31" height="17" fill="none" stroke="#333" stroke-width="0.8" stroke-dasharray="1.2 1.2"/><text x="1088.0" y="297.3" font-size="4" font-weight="bold" fill="#111" text-anchor="middle" font-family="Liberation Sans" textLength="25.0" lengthAdjust="spacingAndGlyphs">MEETING  208</text><line x1="1075.5" y1="298.3" x2="1100.5" y2="298.3" stroke="#111" stroke-width="0.75"/><path d="M1111.8 270.5 H1159.5 V321 L1141 321 C1137 312 1126 303.5 1111.5 303.7 Z" fill="#f7c9a8" fill-opacity="0.6"/><path d="M1111.8 303.7 V270.5 H1159.5 V321" fill="none" stroke="#e04848" stroke-width="1.3" stroke-dasharray="2.2 0.8"/><rect x="1120" y="276" width="31" height="17" fill="none" stroke="#333" stroke-width="0.8" stroke-dasharray="1.2 1.2"/><text x="1136.0" y="297.3" font-size="4" font-weight="bold" fill="#111" text-anchor="middle" font-family="Liberation Sans" textLength="25.0" lengthAdjust="spacingAndGlyphs">MEETING  209</text><line x1="1123.5" y1="298.3" x2="1148.5" y2="298.3" stroke="#111" stroke-width="0.75"/><path d="M1112.4 266.3 V303.7" fill="none" stroke="#333" stroke-width="1.90" /><path d="M1112.4 266.3 V303.7" fill="none" stroke="#9a9a9a" stroke-width="0.51" stroke-dasharray="0.9 0.9" /><path d="M1159.6 266.3 V322" fill="none" stroke="#333" stroke-width="2.00" /><path d="M1159.6 266.3 V322" fill="none" stroke="#9a9a9a" stroke-width="0.54" stroke-dasharray="0.9 0.9" /><path d="M1065 322.4 L1082.3 320 C1090 308 1100 303.7 1111.5 303.7 C1124 303.7 1134 310 1141 321 L1159.6 321.5" fill="none" stroke="#333" stroke-width="2.20" /><path d="M1065 322.4 L1082.3 320 C1090 308 1100 303.7 1111.5 303.7 C1124 303.7 1134 310 1141 321 L1159.6 321.5" fill="none" stroke="#9a9a9a" stroke-width="0.61" stroke-dasharray="0.9 0.9" /><path d="M1141 321 C1136 313 1127 305 1112 303.7" fill="none" stroke="#e04848" stroke-width="1.2" stroke-dasharray="2 1"/><path d="M1096 322.5 Q1112 336 1127.8 322.5 Z" fill="none" stroke="#333" stroke-width="0.8"/><text x="1112.3" y="317" font-size="7.2" fill="#e03838" text-anchor="middle" font-family="Liberation Serif" font-weight="bold">Room 001</text><line x1="1118" y1="310" x2="1118" y2="306" stroke="#e03838" stroke-width="0.8"/><text x="1113.0" y="344.8" font-size="4" font-weight="bold" fill="#111" text-anchor="middle" font-family="Liberation Sans" textLength="28.0" lengthAdjust="spacingAndGlyphs">RECEPTION  201</text><line x1="1099.0" y1="345.8" x2="1127.0" y2="345.8" stroke="#111" stroke-width="0.75"/><path d="M1066 314 A6 6 0 0 1 1066 326" fill="none" stroke="#444" stroke-width="0.7"/><path d="M1158 314 A6 6 0 0 0 1158 326" fill="none" stroke="#444" stroke-width="0.7"/><path d="M954.6 320 A6 6 0 0 1 954.6 332" fill="none" stroke="#444" stroke-width="0.7"/><circle cx="957.5" cy="329" r="2.6" fill="#fff" stroke="#444" stroke-width="0.75"/><path d="M1065 312 A6 6 0 0 0 1065 324" fill="none" stroke="#444" stroke-width="0.7"/><circle cx="1062" cy="321" r="2.6" fill="#fff" stroke="#444" stroke-width="0.75"/><path d="M1065 312 A6 6 0 0 1 1065 324" fill="none" stroke="#444" stroke-width="0.7"/><circle cx="1068" cy="321" r="2.6" fill="#fff" stroke="#444" stroke-width="0.75"/><path d="M1159.6 322 L1286 331" fill="none" stroke="#333" stroke-width="2.20" /><path d="M1159.6 322 L1286 331" fill="none" stroke="#9a9a9a" stroke-width="0.61" stroke-dasharray="0.9 0.9" /><path d="M1206.8 266.3 V325.5" fill="none" stroke="#333" stroke-width="2.00" /><path d="M1206.8 266.3 V325.5" fill="none" stroke="#9a9a9a" stroke-width="0.54" stroke-dasharray="0.9 0.9" /><path d="M1269.7 266.3 V330" fill="none" stroke="#333" stroke-width="2.00" /><path d="M1269.7 266.3 V330" fill="none" stroke="#9a9a9a" stroke-width="0.54" stroke-dasharray="0.9 0.9" /><rect x="1175" y="275.5" width="16" height="40" fill="none" stroke="#333" stroke-width="0.8" stroke-dasharray="1.2 1.2"/><text x="1183.0" y="295.3" font-size="4" font-weight="bold" fill="#111" text-anchor="middle" font-family="Liberation Sans" textLength="25.0" lengthAdjust="spacingAndGlyphs">MEETING  210</text><line x1="1170.5" y1="296.3" x2="1195.5" y2="296.3" stroke="#111" stroke-width="0.75"/><rect x="1218" y="284" width="39" height="22" fill="none" stroke="#333" stroke-width="0.8" stroke-dasharray="1.2 1.2"/><text x="1238.0" y="295.8" font-size="4" font-weight="bold" fill="#111" text-anchor="middle" font-family="Liberation Sans" textLength="32.0" lengthAdjust="spacingAndGlyphs">CONFERENCE  211</text><line x1="1222.0" y1="296.8" x2="1254.0" y2="296.8" stroke="#111" stroke-width="0.75"/><rect x="1270.7" y="267.4" width="16" height="33.2" fill="#faf09a" opacity="0.75"/><path d="M1270 300.6 H1287" fill="none" stroke="#4a3020" stroke-width="2.50" /><path d="M1270 300.6 H1287" fill="none" stroke="#9a9a9a" stroke-width="0.70" stroke-dasharray="0.9 0.9" /><path d="M1162 314 A6 6 0 0 1 1162 326" fill="none" stroke="#444" stroke-width="0.7"/><path d="M1208 319 A6 6 0 0 1 1208 331" fill="none" stroke="#444" stroke-width="0.7"/><path d="M1268 323 A6 6 0 0 0 1268 335" fill="none" stroke="#444" stroke-width="0.7"/><text x="734.5" y="305.8" font-size="4" font-weight="bold" fill="#111" text-anchor="middle" font-family="Liberation Sans" textLength="32.0" lengthAdjust="spacingAndGlyphs">OPEN OFFICE  200</text><line x1="718.5" y1="306.8" x2="750.5" y2="306.8" stroke="#111" stroke-width="0.75"/><text x="736.0" y="523.3" font-size="4" font-weight="bold" fill="#111" text-anchor="middle" font-family="Liberation Sans" textLength="32.0" lengthAdjust="spacingAndGlyphs">OPEN OFFICE  244</text><line x1="720.0" y1="524.3" x2="752.0" y2="524.3" stroke="#111" stroke-width="0.75"/><rect x="757.2" y="364.4" width="210" height="103" rx="6" fill="none" stroke="#444" stroke-width="0.8" stroke-dasharray="1 1"/><rect x="766.3" y="372.5" width="200.8" height="86.3" rx="3.5" fill="#9fb6d2" fill-opacity="0.8" stroke="#d84848" stroke-width="1.2"/><path d="M930 373 H958 Q965.4 373 965.4 380 V451 Q965.4 458 958 458 H930 Q922.5 458 922.5 451 V380 Q922.5 373 930 373Z" fill="none" stroke="#2a3a50" stroke-width="2.30" /><path d="M930 373 H958 Q965.4 373 965.4 380 V451 Q965.4 458 958 458 H930 Q922.5 458 922.5 451 V380 Q922.5 373 930 373Z" fill="none" stroke="#9a9a9a" stroke-width="0.64" stroke-dasharray="0.9 0.9" /><path d="M922.5 415.4 H966" fill="none" stroke="#2a3a50" stroke-width="2.10" /><path d="M922.5 415.4 H966" fill="none" stroke="#9a9a9a" stroke-width="0.58" stroke-dasharray="0.9 0.9" /><rect x="922.5" y="413.8" width="9" height="3.2" fill="#3a3a3a"/><rect x="923.1" y="414.9" width="7.8" height="1" fill="#9a9a9a"/><path d="M922.5 404.9 A10.5 10.5 0 0 1 922.5 425.9" fill="none" stroke="#444" stroke-width="0.75"/><circle cx="922.5" cy="408.8" r="2.6" fill="#b0c3da" stroke="#444" stroke-width="0.75"/><circle cx="922.5" cy="422" r="2.6" fill="#b0c3da" stroke="#444" stroke-width="0.75"/><text x="944.0" y="397.3" font-size="4" font-weight="bold" fill="#223" text-anchor="middle" font-family="Liberation Sans" textLength="22.0" lengthAdjust="spacingAndGlyphs">OFFICE  249</text><line x1="933.0" y1="398.3" x2="955.0" y2="398.3" stroke="#223" stroke-width="0.75"/><text x="943.5" y="436.3" font-size="4" font-weight="bold" fill="#223" text-anchor="middle" font-family="Liberation Sans" textLength="19.0" lengthAdjust="spacingAndGlyphs">COPY  250</text><line x1="934.0" y1="437.3" x2="953.0" y2="437.3" stroke="#223" stroke-width="0.75"/><text x="848.0" y="418.3" font-size="4" font-weight="bold" fill="#223" text-anchor="middle" font-family="Liberation Sans" textLength="33.0" lengthAdjust="spacingAndGlyphs">OPEN OFFICE  248</text><line x1="831.5" y1="419.3" x2="864.5" y2="419.3" stroke="#223" stroke-width="0.75"/><text x="897.2" y="418.6" font-size="6.3" fill="#e03838" text-anchor="middle" font-family="Liberation Sans" font-weight="bold">160.89 sq m</text><rect x="779.7" y="366.4" width="2.6" height="4" fill="#222"/><rect x="779.7" y="460.8" width="2.6" height="4" fill="#222"/><rect x="874.2" y="366.4" width="2.6" height="4" fill="#222"/><rect x="874.2" y="460.8" width="2.6" height="4" fill="#222"/><path d="M972.5 354.5 H985.6 V363.3 H1015.5 V358.5 L1087 362 Q1093.8 363 1093.8 371 V458 Q1093.8 466.3 1085 467.3 L1015.5 473.6 V476.5 H974 Q966.6 476.5 966.6 469 V361 Q966.6 354.5 972.5 354.5Z" fill="none" stroke="#222" stroke-width="2.40" /><path d="M972.5 354.5 H985.6 V363.3 H1015.5 V358.5 L1087 362 Q1093.8 363 1093.8 371 V458 Q1093.8 466.3 1085 467.3 L1015.5 473.6 V476.5 H974 Q966.6 476.5 966.6 469 V361 Q966.6 354.5 972.5 354.5Z" fill="none" stroke="#9a9a9a" stroke-width="0.67" stroke-dasharray="0.9 0.9" /><path d="M973.5 364.8 H1094 M973.5 364.8 V466.3 H1015.5 M985.2 466.3 V476.5" fill="none" stroke="#333" stroke-width="2.10" /><path d="M973.5 364.8 H1094 M973.5 364.8 V466.3 H1015.5 M985.2 466.3 V476.5" fill="none" stroke="#9a9a9a" stroke-width="0.58" stroke-dasharray="0.9 0.9" /><path d="M972 479.5 L1062 473" fill="none" stroke="#555" stroke-width="0.8" stroke-dasharray="2.2 1.6"/><path d="M999.6 364.8 V466.3" fill="none" stroke="#222" stroke-width="2.90" /><path d="M999.6 364.8 V466.3" fill="none" stroke="#9a9a9a" stroke-width="0.83" stroke-dasharray="0.9 0.9" /><path d="M973.5 424.2 H1054.7" fill="none" stroke="#222" stroke-width="2.50" /><path d="M973.5 424.2 H1054.7" fill="none" stroke="#9a9a9a" stroke-width="0.70" stroke-dasharray="0.9 0.9" /><path d="M1054.7 364.8 V423.8 M1065 364.8 V431.8 M1070 364.8 V466.3" fill="none" stroke="#333" stroke-width="1.90" /><path d="M1054.7 364.8 V423.8 M1065 364.8 V431.8 M1070 364.8 V466.3" fill="none" stroke="#9a9a9a" stroke-width="0.51" stroke-dasharray="0.9 0.9" /><path d="M1055.5 366 L1064.5 423 M1064.5 366 L1055.5 423" stroke="#555" stroke-width="0.6"/><line x1="976" y1="391.0" x2="997" y2="391.0" stroke="#333" stroke-width="0.9" stroke-dasharray="1 1"/><line x1="976" y1="394.6" x2="997" y2="394.6" stroke="#333" stroke-width="0.9" stroke-dasharray="1 1"/><line x1="976" y1="398.2" x2="997" y2="398.2" stroke="#333" stroke-width="0.9" stroke-dasharray="1 1"/><line x1="976" y1="401.8" x2="997" y2="401.8" stroke="#333" stroke-width="0.9" stroke-dasharray="1 1"/><line x1="976" y1="405.4" x2="997" y2="405.4" stroke="#333" stroke-width="0.9" stroke-dasharray="1 1"/><line x1="976" y1="409.0" x2="997" y2="409.0" stroke="#333" stroke-width="0.9" stroke-dasharray="1 1"/><line x1="976" y1="412.6" x2="997" y2="412.6" stroke="#333" stroke-width="0.9" stroke-dasharray="1 1"/><path d="M985.5 388 V416" fill="none" stroke="#333" stroke-width="1.50" /><rect x="1002.5" y="387" width="5.4" height="9" fill="none" stroke="#444" stroke-width="0.7"/><rect x="1009.1" y="387" width="5.4" height="9" fill="none" stroke="#444" stroke-width="0.7"/><rect x="1015.7" y="387" width="5.4" height="9" fill="none" stroke="#444" stroke-width="0.7"/><rect x="1022.3" y="387" width="5.4" height="9" fill="none" stroke="#444" stroke-width="0.7"/><rect x="1028.9" y="387" width="5.4" height="9" fill="none" stroke="#444" stroke-width="0.7"/><path d="M1001 396.5 H1040 V364.8" fill="none" stroke="#333" stroke-width="1.60" /><text x="984.5" y="381.3" font-size="4" font-weight="bold" fill="#111" text-anchor="middle" font-family="Liberation Sans" textLength="16.0" lengthAdjust="spacingAndGlyphs">STAIR  251</text><line x1="976.5" y1="382.3" x2="992.5" y2="382.3" stroke="#111" stroke-width="0.75"/><text x="1019.0" y="381.3" font-size="4" font-weight="bold" fill="#111" text-anchor="middle" font-family="Liberation Sans" textLength="26.0" lengthAdjust="spacingAndGlyphs">ELECTRICAL  253</text><line x1="1006.0" y1="382.3" x2="1032.0" y2="382.3" stroke="#111" stroke-width="0.75"/><text x="1018.0" y="406.8" font-size="4" font-weight="bold" fill="#111" text-anchor="middle" font-family="Liberation Sans" textLength="20.0" lengthAdjust="spacingAndGlyphs">STORAGE  254B</text><line x1="1008.0" y1="407.8" x2="1028.0" y2="407.8" stroke="#111" stroke-width="0.75"/><text x="1011.0" y="419.8" font-size="4" font-weight="bold" fill="#111" text-anchor="middle" font-family="Liberation Sans" textLength="22.0" lengthAdjust="spacingAndGlyphs">STORAGE  254A</text><line x1="1000.0" y1="420.8" x2="1022.0" y2="420.8" stroke="#111" stroke-width="0.75"/><rect x="1070" y="373" width="23.4" height="58.8" fill="#c6e0a6" stroke="#e05838" stroke-width="1.2" stroke-dasharray="2 0.8"/><path d="M1072 375 H1091.5 V401.5 H1072Z M1072 403 H1091.5 V430 H1072Z M1072 375 L1091.5 401.5 M1091.5 375 L1072 401.5 M1072 403 L1091.5 430 M1091.5 403 L1072 430" fill="none" stroke="#345" stroke-width="0.7"/><rect x="1095" y="398" width="13" height="5" fill="#c6e0a6" opacity="0.9"/><text x="1101.0" y="408.3" font-size="4" font-weight="bold" fill="#111" text-anchor="middle" font-family="Liberation Sans" textLength="10.0" lengthAdjust="spacingAndGlyphs">LOBBY 2</text><line x1="1096.0" y1="409.3" x2="1106.0" y2="409.3" stroke="#111" stroke-width="0.75"/><path d="M1073 441 H1092 V456 H1073Z M1073 456 L1092 441 M1073 441 L1092 456" fill="none" stroke="#444" stroke-width="0.7"/><path d="M1082 436 H1092 V441" fill="none" stroke="#444" stroke-width="0.7"/><path d="M1002 430 V442.5 H1022 V424.2" fill="none" stroke="#333" stroke-width="1.70" /><path d="M1022 424.2 V440 M1020 458 H1052 V466 M1020 458 V466" fill="none" stroke="#333" stroke-width="1.60" /><circle cx="1026" cy="429" r="1.6" fill="#444"/><circle cx="1034" cy="429" r="1.6" fill="#444"/><circle cx="1044" cy="429" r="1.6" fill="#444"/><circle cx="1063" cy="429" r="1.6" fill="#444"/><rect x="1026" y="459.5" width="4" height="3.2" fill="#333"/><rect x="1039" y="459.5" width="4" height="3.2" fill="#333"/><text x="1035.0" y="452.5" font-size="4" font-weight="bold" fill="#111" text-anchor="middle" font-family="Liberation Sans" textLength="30.0" lengthAdjust="spacingAndGlyphs">WOMEN'S RR  256</text><line x1="1020.0" y1="453.5" x2="1050.0" y2="453.5" stroke="#111" stroke-width="0.75"/><path d="M999.6 365 A6 6 0 0 0 999.6 377" fill="none" stroke="#444" stroke-width="0.7"/><path d="M999.6 365 A6 6 0 0 1 999.6 377" fill="none" stroke="#444" stroke-width="0.7"/><path d="M999.6 454 A6 6 0 0 0 999.6 466" fill="none" stroke="#444" stroke-width="0.7"/><path d="M999.6 454 A6 6 0 0 1 999.6 466" fill="none" stroke="#444" stroke-width="0.7"/><circle cx="993" cy="370" r="2.6" fill="#fff" stroke="#444" stroke-width="0.75"/><circle cx="1006" cy="370" r="2.6" fill="#fff" stroke="#444" stroke-width="0.75"/><circle cx="993" cy="462" r="2.6" fill="#fff" stroke="#444" stroke-width="0.75"/><circle cx="1006" cy="462" r="2.6" fill="#fff" stroke="#444" stroke-width="0.75"/><circle cx="1035" cy="371" r="2.6" fill="#fff" stroke="#444" stroke-width="0.75"/><circle cx="1003.5" cy="436" r="2.6" fill="#fff" stroke="#444" stroke-width="0.75"/><path d="M973.5 446 H981 V455 H973.5" fill="none" stroke="#333" stroke-width="1.30" /><rect x="976" y="452" width="5" height="5" fill="#333"/><path d="M1066.5 472.5 L1075.5 482 H1081" fill="none" stroke="#555" stroke-width="0.7"/><rect x="1064" y="471" width="4" height="2.5" fill="none" stroke="#666" stroke-width="0.5"/><circle cx="1086.6" cy="482" r="5.8" fill="#fff" stroke="#444" stroke-width="0.8"/><line x1="1081.5" y1="482.5" x2="1091.5" y2="482.5" stroke="#777" stroke-width="0.5"/><path d="M1140 363 L1212 356 H1221 V352 H1245 Q1255 352 1256 362 V468 Q1255 476 1245 476 H1221 V470 L1145 463.5 Q1130 462 1130 450 V376 Q1130 364 1140 363Z" fill="none" stroke="#222" stroke-width="2.40" /><path d="M1140 363 L1212 356 H1221 V352 H1245 Q1255 352 1256 362 V468 Q1255 476 1245 476 H1221 V470 L1145 463.5 Q1130 462 1130 450 V376 Q1130 364 1140 363Z" fill="none" stroke="#9a9a9a" stroke-width="0.67" stroke-dasharray="0.9 0.9" /><path d="M1154 366 V466 M1130 366 H1223 M1154 424 H1223 V470 M1223 366 V424" fill="none" stroke="#333" stroke-width="2.10" /><path d="M1154 366 V466 M1130 366 H1223 M1154 424 H1223 V470 M1223 366 V424" fill="none" stroke="#9a9a9a" stroke-width="0.58" stroke-dasharray="0.9 0.9" /><path d="M1223 366 H1249 V466 M1223 404 H1249" fill="none" stroke="#333" stroke-width="1.90" /><path d="M1223 366 H1249 V466 M1223 404 H1249" fill="none" stroke="#9a9a9a" stroke-width="0.51" stroke-dasharray="0.9 0.9" /><path d="M1154.5 400 H1130" fill="none" stroke="#333" stroke-width="1.50" /><rect x="1132.4" y="375" width="19.1" height="25" fill="#fbf09c" stroke="#e07828" stroke-width="0.9"/><path d="M1132.4 375 L1151.5 400 M1151.5 375 L1132.4 400" stroke="#8a8" stroke-width="0.6"/><path d="M1133 402 H1151 V428 H1133Z M1133 402 L1151 428 M1151 402 L1133 428" fill="none" stroke="#444" stroke-width="0.7"/><path d="M1133 439 H1150 V456 H1133Z M1133 456 L1150 439" fill="none" stroke="#444" stroke-width="0.7"/><path d="M1130 432 H1154" fill="none" stroke="#333" stroke-width="1.90" /><path d="M1130 432 H1154" fill="none" stroke="#9a9a9a" stroke-width="0.51" stroke-dasharray="0.9 0.9" /><rect x="1159" y="374.5" width="58.5" height="40.5" rx="3" fill="#f9c9cd" stroke="#e04a50" stroke-width="1.4" stroke-dasharray="2.5 0.8"/><rect x="1162.0" y="377" width="11.5" height="35" fill="none" stroke="#d04048" stroke-width="0.7"/><line x1="1167.8" y1="377" x2="1167.8" y2="412" stroke="#d04048" stroke-width="0.6"/><rect x="1176.5" y="377" width="11.5" height="35" fill="none" stroke="#d04048" stroke-width="0.7"/><line x1="1182.2" y1="377" x2="1182.2" y2="412" stroke="#d04048" stroke-width="0.6"/><rect x="1191.0" y="377" width="11.5" height="35" fill="none" stroke="#d04048" stroke-width="0.7"/><line x1="1196.8" y1="377" x2="1196.8" y2="412" stroke="#d04048" stroke-width="0.6"/><rect x="1205.5" y="377" width="11.5" height="35" fill="none" stroke="#d04048" stroke-width="0.7"/><line x1="1211.2" y1="377" x2="1211.2" y2="412" stroke="#d04048" stroke-width="0.6"/><line x1="1162" y1="388.5" x2="1215" y2="388.5" stroke="#d04048" stroke-width="0.7"/><line x1="1162" y1="400.5" x2="1215" y2="400.5" stroke="#d04048" stroke-width="0.7"/><text x="1183.0" y="370.8" font-size="4" font-weight="bold" fill="#111" text-anchor="middle" font-family="Liberation Sans" textLength="21.0" lengthAdjust="spacingAndGlyphs">SERVER  257</text><line x1="1172.5" y1="371.8" x2="1193.5" y2="371.8" stroke="#111" stroke-width="0.75"/><text x="1193.0" y="419.8" font-size="4" font-weight="bold" fill="#111" text-anchor="middle" font-family="Liberation Sans" textLength="24.0" lengthAdjust="spacingAndGlyphs">STORAGE  258A</text><line x1="1181.0" y1="420.8" x2="1205.0" y2="420.8" stroke="#111" stroke-width="0.75"/><text x="1238.0" y="386.3" font-size="4" font-weight="bold" fill="#111" text-anchor="middle" font-family="Liberation Sans" textLength="6.0" lengthAdjust="spacingAndGlyphs">S</text><line x1="1235.0" y1="387.3" x2="1241.0" y2="387.3" stroke="#111" stroke-width="0.75"/><line x1="1226" y1="428.0" x2="1248" y2="428.0" stroke="#333" stroke-width="0.9" stroke-dasharray="1 1"/><line x1="1226" y1="431.4" x2="1248" y2="431.4" stroke="#333" stroke-width="0.9" stroke-dasharray="1 1"/><line x1="1226" y1="434.8" x2="1248" y2="434.8" stroke="#333" stroke-width="0.9" stroke-dasharray="1 1"/><line x1="1226" y1="438.2" x2="1248" y2="438.2" stroke="#333" stroke-width="0.9" stroke-dasharray="1 1"/><line x1="1226" y1="441.6" x2="1248" y2="441.6" stroke="#333" stroke-width="0.9" stroke-dasharray="1 1"/><line x1="1226" y1="445.0" x2="1248" y2="445.0" stroke="#333" stroke-width="0.9" stroke-dasharray="1 1"/><line x1="1226" y1="448.4" x2="1248" y2="448.4" stroke="#333" stroke-width="0.9" stroke-dasharray="1 1"/><line x1="1226" y1="451.8" x2="1248" y2="451.8" stroke="#333" stroke-width="0.9" stroke-dasharray="1 1"/><path d="M1236 428 V455" fill="none" stroke="#333" stroke-width="1.50" /><path d="M1159 424 V466 M1193 424 V440 H1203 V424 M1180 440 H1205 V466" fill="none" stroke="#333" stroke-width="1.50" /><circle cx="1161" cy="429" r="1.5" fill="#444"/><circle cx="1169" cy="429" r="1.5" fill="#444"/><circle cx="1188" cy="429" r="1.5" fill="#444"/><circle cx="1196" cy="429" r="1.5" fill="#444"/><rect x="1173" y="458.5" width="4.5" height="3.2" fill="#333"/><rect x="1187" y="458.5" width="4.5" height="3.2" fill="#333"/><text x="1185.0" y="451.3" font-size="4" font-weight="bold" fill="#111" text-anchor="middle" font-family="Liberation Sans" textLength="20.0" lengthAdjust="spacingAndGlyphs">MEN'S RR  260</text><line x1="1175.0" y1="452.3" x2="1195.0" y2="452.3" stroke="#111" stroke-width="0.75"/><text x="1235.0" y="451.3" font-size="4" font-weight="bold" fill="#111" text-anchor="middle" font-family="Liberation Sans" textLength="16.0" lengthAdjust="spacingAndGlyphs">STAIR  259</text><line x1="1227.0" y1="452.3" x2="1243.0" y2="452.3" stroke="#111" stroke-width="0.75"/><circle cx="1184" cy="444" r="2.6" fill="#fff" stroke="#444" stroke-width="0.75"/><circle cx="1217" cy="444" r="2.6" fill="#fff" stroke="#444" stroke-width="0.75"/><circle cx="1218" cy="462" r="2.6" fill="#fff" stroke="#444" stroke-width="0.75"/><circle cx="1230" cy="462" r="2.6" fill="#fff" stroke="#444" stroke-width="0.75"/><circle cx="1217" cy="370" r="2.6" fill="#fff" stroke="#444" stroke-width="0.75"/><circle cx="1230" cy="370" r="2.6" fill="#fff" stroke="#444" stroke-width="0.75"/><path d="M1223 364 A6 6 0 0 0 1223 376" fill="none" stroke="#444" stroke-width="0.7"/><path d="M1223 364 A6 6 0 0 1 1223 376" fill="none" stroke="#444" stroke-width="0.7"/><path d="M1223 456 A6 6 0 0 0 1223 468" fill="none" stroke="#444" stroke-width="0.7"/><path d="M1223 456 A6 6 0 0 1 1223 468" fill="none" stroke="#444" stroke-width="0.7"/><path d="M1256 373 H1287 M1256 459 H1287" fill="none" stroke="#333" stroke-width="2.30" /><path d="M1256 373 H1287 M1256 459 H1287" fill="none" stroke="#9a9a9a" stroke-width="0.64" stroke-dasharray="0.9 0.9" /><path d="M1257 417 H1287" fill="none" stroke="#555" stroke-width="1.20" /><text x="1275.0" y="391.3" font-size="4" font-weight="bold" fill="#111" text-anchor="middle" font-family="Liberation Sans" textLength="17.0" lengthAdjust="spacingAndGlyphs">OFFICE  261</text><line x1="1266.5" y1="392.3" x2="1283.5" y2="392.3" stroke="#111" stroke-width="0.75"/><text x="1275.0" y="445.3" font-size="4" font-weight="bold" fill="#111" text-anchor="middle" font-family="Liberation Sans" textLength="17.0" lengthAdjust="spacingAndGlyphs">COPY  262</text><line x1="1266.5" y1="446.3" x2="1283.5" y2="446.3" stroke="#111" stroke-width="0.75"/><path d="M796.6 564.3 V496.2 Q796.6 490.2 802.6 490.2 L854 493.4 Q860 493.4 860 499.4 V564.3" fill="none" stroke="#333" stroke-width="2.20" /><path d="M796.6 564.3 V496.2 Q796.6 490.2 802.6 490.2 L854 493.4 Q860 493.4 860 499.4 V564.3" fill="none" stroke="#9a9a9a" stroke-width="0.61" stroke-dasharray="0.9 0.9" /><path d="M796.6 525.2 H860" fill="none" stroke="#333" stroke-width="1.90" /><path d="M796.6 525.2 H860" fill="none" stroke="#9a9a9a" stroke-width="0.51" stroke-dasharray="0.9 0.9" /><rect x="858.3" y="515.2" width="3.4" height="20.0" fill="#fff"/><rect x="851.0" y="523.6" width="9" height="3.2" fill="#3a3a3a"/><rect x="851.6" y="524.7" width="7.8" height="1" fill="#9a9a9a"/><path d="M860 514.7 A10.5 10.5 0 0 0 860 535.7" fill="none" stroke="#444" stroke-width="0.75"/><circle cx="860" cy="518.6" r="2.6" fill="#fff" stroke="#444" stroke-width="0.75"/><circle cx="860" cy="531.8" r="2.6" fill="#fff" stroke="#444" stroke-width="0.75"/><text x="828.0" y="509.8" font-size="4" font-weight="bold" fill="#111" text-anchor="middle" font-family="Liberation Sans" textLength="22.0" lengthAdjust="spacingAndGlyphs">OFFICE  242</text><line x1="817.0" y1="510.8" x2="839.0" y2="510.8" stroke="#111" stroke-width="0.75"/><text x="828.0" y="546.8" font-size="4" font-weight="bold" fill="#111" text-anchor="middle" font-family="Liberation Sans" textLength="22.0" lengthAdjust="spacingAndGlyphs">OFFICE  243</text><line x1="817.0" y1="547.8" x2="839.0" y2="547.8" stroke="#111" stroke-width="0.75"/><path d="M890.8 564.3 V502.6 Q890.8 496.6 896.8 496.6 L948.6 500 Q954.6 500 954.6 506 V564.3" fill="none" stroke="#333" stroke-width="2.20" /><path d="M890.8 564.3 V502.6 Q890.8 496.6 896.8 496.6 L948.6 500 Q954.6 500 954.6 506 V564.3" fill="none" stroke="#9a9a9a" stroke-width="0.61" stroke-dasharray="0.9 0.9" /><path d="M922.8 498.3 V564.3" fill="none" stroke="#333" stroke-width="2.20" /><path d="M922.8 498.3 V564.3" fill="none" stroke="#9a9a9a" stroke-width="0.61" stroke-dasharray="0.9 0.9" /><path d="M890.8 531.7 H954.6" fill="none" stroke="#333" stroke-width="1.90" /><path d="M890.8 531.7 H954.6" fill="none" stroke="#9a9a9a" stroke-width="0.51" stroke-dasharray="0.9 0.9" /><rect x="889.0999999999999" y="521.7" width="3.4" height="20.0" fill="#fff"/><rect x="890.8" y="530.1" width="9" height="3.2" fill="#3a3a3a"/><rect x="891.4" y="531.2" width="7.8" height="1" fill="#9a9a9a"/><path d="M890.8 521.2 A10.5 10.5 0 0 1 890.8 542.2" fill="none" stroke="#444" stroke-width="0.75"/><rect x="952.9" y="521.7" width="3.4" height="20.0" fill="#fff"/><rect x="945.6" y="530.1" width="9" height="3.2" fill="#3a3a3a"/><rect x="946.2" y="531.2" width="7.8" height="1" fill="#9a9a9a"/><path d="M954.6 521.2 A10.5 10.5 0 0 0 954.6 542.2" fill="none" stroke="#444" stroke-width="0.75"/><circle cx="890.8" cy="525.1" r="2.6" fill="#fff" stroke="#444" stroke-width="0.75"/><circle cx="890.8" cy="538.3" r="2.6" fill="#fff" stroke="#444" stroke-width="0.75"/><circle cx="954.6" cy="525.1" r="2.6" fill="#fff" stroke="#444" stroke-width="0.75"/><circle cx="954.6" cy="538.3" r="2.6" fill="#fff" stroke="#444" stroke-width="0.75"/><text x="907.0" y="513.8" font-size="4" font-weight="bold" fill="#111" text-anchor="middle" font-family="Liberation Sans" textLength="19.0" lengthAdjust="spacingAndGlyphs">OFFICE  240</text><line x1="897.5" y1="514.8" x2="916.5" y2="514.8" stroke="#111" stroke-width="0.75"/><text x="938.5" y="513.8" font-size="4" font-weight="bold" fill="#111" text-anchor="middle" font-family="Liberation Sans" textLength="19.0" lengthAdjust="spacingAndGlyphs">OFFICE  238</text><line x1="929.0" y1="514.8" x2="948.0" y2="514.8" stroke="#111" stroke-width="0.75"/><text x="907.0" y="548.3" font-size="4" font-weight="bold" fill="#111" text-anchor="middle" font-family="Liberation Sans" textLength="19.0" lengthAdjust="spacingAndGlyphs">OFFICE  241</text><line x1="897.5" y1="549.3" x2="916.5" y2="549.3" stroke="#111" stroke-width="0.75"/><text x="938.5" y="548.3" font-size="4" font-weight="bold" fill="#111" text-anchor="middle" font-family="Liberation Sans" textLength="19.0" lengthAdjust="spacingAndGlyphs">OFFICE  239</text><line x1="929.0" y1="549.3" x2="948.0" y2="549.3" stroke="#111" stroke-width="0.75"/><path d="M985.5 564.3 V510.2 Q985.5 504.2 991.5 504.2 L1043 506 Q1049 506 1049 512 V564.3" fill="none" stroke="#333" stroke-width="2.20" /><path d="M985.5 564.3 V510.2 Q985.5 504.2 991.5 504.2 L1043 506 Q1049 506 1049 512 V564.3" fill="none" stroke="#9a9a9a" stroke-width="0.61" stroke-dasharray="0.9 0.9" /><path d="M1017.3 505.1 V564.3" fill="none" stroke="#333" stroke-width="2.20" /><path d="M1017.3 505.1 V564.3" fill="none" stroke="#9a9a9a" stroke-width="0.61" stroke-dasharray="0.9 0.9" /><path d="M985.5 531.3 H1049" fill="none" stroke="#333" stroke-width="1.90" /><path d="M985.5 531.3 H1049" fill="none" stroke="#9a9a9a" stroke-width="0.51" stroke-dasharray="0.9 0.9" /><rect x="983.8" y="521.3" width="3.4" height="20.0" fill="#fff"/><rect x="985.5" y="529.7" width="9" height="3.2" fill="#3a3a3a"/><rect x="986.1" y="530.8" width="7.8" height="1" fill="#9a9a9a"/><path d="M985.5 520.8 A10.5 10.5 0 0 1 985.5 541.8" fill="none" stroke="#444" stroke-width="0.75"/><rect x="1047.3" y="521.3" width="3.4" height="20.0" fill="#fff"/><rect x="1040.0" y="529.7" width="9" height="3.2" fill="#3a3a3a"/><rect x="1040.6" y="530.8" width="7.8" height="1" fill="#9a9a9a"/><path d="M1049 520.8 A10.5 10.5 0 0 0 1049 541.8" fill="none" stroke="#444" stroke-width="0.75"/><circle cx="985.5" cy="524.7" r="2.6" fill="#fff" stroke="#444" stroke-width="0.75"/><circle cx="985.5" cy="537.9" r="2.6" fill="#fff" stroke="#444" stroke-width="0.75"/><circle cx="1049" cy="524.7" r="2.6" fill="#fff" stroke="#444" stroke-width="0.75"/><circle cx="1049" cy="537.9" r="2.6" fill="#fff" stroke="#444" stroke-width="0.75"/><text x="1001.0" y="519.3" font-size="4" font-weight="bold" fill="#111" text-anchor="middle" font-family="Liberation Sans" textLength="20.0" lengthAdjust="spacingAndGlyphs">OFFICE  236</text><line x1="991.0" y1="520.3" x2="1011.0" y2="520.3" stroke="#111" stroke-width="0.75"/><text x="1033.0" y="519.3" font-size="4" font-weight="bold" fill="#111" text-anchor="middle" font-family="Liberation Sans" textLength="22.0" lengthAdjust="spacingAndGlyphs">MEETING  234</text><line x1="1022.0" y1="520.3" x2="1044.0" y2="520.3" stroke="#111" stroke-width="0.75"/><text x="1001.0" y="551.3" font-size="4" font-weight="bold" fill="#111" text-anchor="middle" font-family="Liberation Sans" textLength="20.0" lengthAdjust="spacingAndGlyphs">OFFICE  237</text><line x1="991.0" y1="552.3" x2="1011.0" y2="552.3" stroke="#111" stroke-width="0.75"/><text x="1033.0" y="551.3" font-size="4" font-weight="bold" fill="#111" text-anchor="middle" font-family="Liberation Sans" textLength="22.0" lengthAdjust="spacingAndGlyphs">MEETING  235</text><line x1="1022.0" y1="552.3" x2="1044.0" y2="552.3" stroke="#111" stroke-width="0.75"/><path d="M1175.4 564.3 V514 Q1175.4 508 1181.4 508 L1233.3 503 Q1239.3 503 1239.3 509 V564.3" fill="none" stroke="#333" stroke-width="2.20" /><path d="M1175.4 564.3 V514 Q1175.4 508 1181.4 508 L1233.3 503 Q1239.3 503 1239.3 509 V564.3" fill="none" stroke="#9a9a9a" stroke-width="0.61" stroke-dasharray="0.9 0.9" /><path d="M1206.9 505.5 V564.3" fill="none" stroke="#333" stroke-width="2.20" /><path d="M1206.9 505.5 V564.3" fill="none" stroke="#9a9a9a" stroke-width="0.61" stroke-dasharray="0.9 0.9" /><path d="M1175.4 531 H1239.3" fill="none" stroke="#333" stroke-width="1.90" /><path d="M1175.4 531 H1239.3" fill="none" stroke="#9a9a9a" stroke-width="0.51" stroke-dasharray="0.9 0.9" /><rect x="1173.7" y="521.0" width="3.4" height="20.0" fill="#fff"/><rect x="1175.4" y="529.4" width="9" height="3.2" fill="#3a3a3a"/><rect x="1176.0" y="530.5" width="7.8" height="1" fill="#9a9a9a"/><path d="M1175.4 520.5 A10.5 10.5 0 0 1 1175.4 541.5" fill="none" stroke="#444" stroke-width="0.75"/><rect x="1237.6" y="521.0" width="3.4" height="20.0" fill="#fff"/><rect x="1230.3" y="529.4" width="9" height="3.2" fill="#3a3a3a"/><rect x="1230.9" y="530.5" width="7.8" height="1" fill="#9a9a9a"/><path d="M1239.3 520.5 A10.5 10.5 0 0 0 1239.3 541.5" fill="none" stroke="#444" stroke-width="0.75"/><circle cx="1175.4" cy="524.4" r="2.6" fill="#fff" stroke="#444" stroke-width="0.75"/><circle cx="1175.4" cy="537.6" r="2.6" fill="#fff" stroke="#444" stroke-width="0.75"/><circle cx="1239.3" cy="524.4" r="2.6" fill="#fff" stroke="#444" stroke-width="0.75"/><circle cx="1239.3" cy="537.6" r="2.6" fill="#fff" stroke="#444" stroke-width="0.75"/><text x="1191.0" y="519.3" font-size="4" font-weight="bold" fill="#111" text-anchor="middle" font-family="Liberation Sans" textLength="22.0" lengthAdjust="spacingAndGlyphs">MEETING  231</text><line x1="1180.0" y1="520.3" x2="1202.0" y2="520.3" stroke="#111" stroke-width="0.75"/><text x="1223.0" y="519.3" font-size="4" font-weight="bold" fill="#111" text-anchor="middle" font-family="Liberation Sans" textLength="20.0" lengthAdjust="spacingAndGlyphs">OFFICE  229</text><line x1="1213.0" y1="520.3" x2="1233.0" y2="520.3" stroke="#111" stroke-width="0.75"/><text x="1191.0" y="547.8" font-size="4" font-weight="bold" fill="#111" text-anchor="middle" font-family="Liberation Sans" textLength="22.0" lengthAdjust="spacingAndGlyphs">MEETING  232</text><line x1="1180.0" y1="548.8" x2="1202.0" y2="548.8" stroke="#111" stroke-width="0.75"/><text x="1223.0" y="547.8" font-size="4" font-weight="bold" fill="#111" text-anchor="middle" font-family="Liberation Sans" textLength="20.0" lengthAdjust="spacingAndGlyphs">OFFICE  230</text><line x1="1213.0" y1="548.8" x2="1233.0" y2="548.8" stroke="#111" stroke-width="0.75"/><path d="M1269.3 564.3 V506 Q1269.3 500 1275 499.5 L1287 498.5" fill="none" stroke="#333" stroke-width="2.20" /><path d="M1269.3 564.3 V506 Q1269.3 500 1275 499.5 L1287 498.5" fill="none" stroke="#9a9a9a" stroke-width="0.61" stroke-dasharray="0.9 0.9" /><path d="M1269.3 531 H1287" fill="none" stroke="#333" stroke-width="1.90" /><path d="M1269.3 531 H1287" fill="none" stroke="#9a9a9a" stroke-width="0.51" stroke-dasharray="0.9 0.9" /><rect x="1267.6" y="521.0" width="3.4" height="20.0" fill="#fff"/><rect x="1269.3" y="529.4" width="9" height="3.2" fill="#3a3a3a"/><rect x="1269.9" y="530.5" width="7.8" height="1" fill="#9a9a9a"/><path d="M1269.3 520.5 A10.5 10.5 0 0 1 1269.3 541.5" fill="none" stroke="#444" stroke-width="0.75"/><text x="1280.0" y="510.3" font-size="4" font-weight="bold" fill="#111" text-anchor="middle" font-family="Liberation Sans" textLength="14.0" lengthAdjust="spacingAndGlyphs">OFFICE</text><line x1="1273.0" y1="511.3" x2="1287.0" y2="511.3" stroke="#111" stroke-width="0.75"/><text x="1280.0" y="549.3" font-size="4" font-weight="bold" fill="#111" text-anchor="middle" font-family="Liberation Sans" textLength="14.0" lengthAdjust="spacingAndGlyphs">OFFICE</text><line x1="1273.0" y1="550.3" x2="1287.0" y2="550.3" stroke="#111" stroke-width="0.75"/><path d="M1053 501 H1172.4 Q1178.4 501 1178.4 507 V566 Q1178.4 572 1172.4 572 H1053 Q1047 572 1047 566 V507 Q1047 501 1053 501Z" fill="none" stroke="#444" stroke-width="0.8" stroke-dasharray="2.5 1.5"/><path d="M1064 508 L1111.5 512 L1159 508 V522 H1064 Z" fill="none" stroke="#222" stroke-width="1.90" /><path d="M1064 508 L1111.5 512 L1159 508 V522 H1064 Z" fill="none" stroke="#9a9a9a" stroke-width="0.51" stroke-dasharray="0.9 0.9" /><rect x="1066" y="514" width="10" height="6.5" fill="none" stroke="#222" stroke-width="0.9"/><rect x="1147" y="514" width="10" height="6.5" fill="none" stroke="#222" stroke-width="0.9"/><rect x="1079" y="514" width="65" height="5" fill="none" stroke="#444" stroke-width="0.6" stroke-dasharray="1 1"/><rect x="1083" y="526.3" width="58" height="19.3" fill="none" stroke="#444" stroke-width="0.7" stroke-dasharray="1 1"/><rect x="1086" y="530" width="52" height="11.5" fill="none" stroke="#444" stroke-width="0.7"/><text x="1112.0" y="537.3" font-size="4" font-weight="bold" fill="#111" text-anchor="middle" font-family="Liberation Sans" textLength="21.0" lengthAdjust="spacingAndGlyphs">BREAK  233</text><line x1="1101.5" y1="538.3" x2="1122.5" y2="538.3" stroke="#111" stroke-width="0.75"/><rect x="1061" y="553.2" width="102" height="8.6" fill="none" stroke="#333" stroke-width="1.1"/><rect x="1061.5" y="553.7" width="7" height="7.6" fill="none" stroke="#222" stroke-width="1.2"/><rect x="1155.5" y="553.7" width="7" height="7.6" fill="none" stroke="#222" stroke-width="1.2"/><path d="M1178 572 L1185 578" fill="none" stroke="#555" stroke-width="0.7"/><circle cx="1187.3" cy="584.1" r="5.6" fill="#fff" stroke="#444" stroke-width="0.8"/><line x1="1182" y1="584" x2="1192.5" y2="584" stroke="#555" stroke-width="0.5"/><path d="M679.5 351.5 L733.5 348 L739 355 L739 476 L732 483.2 L679.5 479.4 Z" fill="#b597cc" fill-opacity="0.68"/><path d="M679.5 383.6 H739 M679.5 447.5 H739" fill="none" stroke="#3a2c50" stroke-width="2.30" /><path d="M679.5 383.6 H739 M679.5 447.5 H739" fill="none" stroke="#9a9a9a" stroke-width="0.64" stroke-dasharray="0.9 0.9" /><rect x="696" y="392" width="25.3" height="47" fill="none" stroke="#3a2c50" stroke-width="0.9"/><rect x="730.0" y="382.0" width="9" height="3.2" fill="#3a3a3a"/><rect x="730.6" y="383.1" width="7.8" height="1" fill="#9a9a9a"/><path d="M739 373.1 A10.5 10.5 0 0 0 739 394.1" fill="none" stroke="#444" stroke-width="0.75"/><rect x="730.0" y="445.9" width="9" height="3.2" fill="#3a3a3a"/><rect x="730.6" y="447.0" width="7.8" height="1" fill="#9a9a9a"/><path d="M739 437.0 A10.5 10.5 0 0 0 739 458.0" fill="none" stroke="#444" stroke-width="0.75"/><circle cx="739" cy="377" r="2.6" fill="#cdb9dc" stroke="#444" stroke-width="0.75"/><circle cx="739" cy="390.2" r="2.6" fill="#cdb9dc" stroke="#444" stroke-width="0.75"/><circle cx="739" cy="440.9" r="2.6" fill="#cdb9dc" stroke="#444" stroke-width="0.75"/><circle cx="739" cy="454.1" r="2.6" fill="#cdb9dc" stroke="#444" stroke-width="0.75"/><text x="709.5" y="368.3" font-size="4" font-weight="bold" fill="#2a2040" text-anchor="middle" font-family="Liberation Sans" textLength="24.0" lengthAdjust="spacingAndGlyphs">MEETING  247</text><line x1="697.5" y1="369.3" x2="721.5" y2="369.3" stroke="#2a2040" stroke-width="0.75"/><text x="709.0" y="419.0" font-size="4" font-weight="bold" fill="#2a2040" text-anchor="middle" font-family="Liberation Sans" textLength="27.0" lengthAdjust="spacingAndGlyphs">CONFERENCE  246</text><line x1="695.5" y1="420.0" x2="722.5" y2="420.0" stroke="#2a2040" stroke-width="0.75"/><text x="710.0" y="466.7" font-size="4" font-weight="bold" fill="#2a2040" text-anchor="middle" font-family="Liberation Sans" textLength="24.0" lengthAdjust="spacingAndGlyphs">MEETING  245</text><line x1="698.0" y1="467.7" x2="722.0" y2="467.7" stroke="#2a2040" stroke-width="0.75"/><line x1="666" y1="368.4" x2="745" y2="368.4" stroke="#6a5a78" stroke-width="1.3" stroke-dasharray="15 3.2 3 3.2"/><line x1="666" y1="462.8" x2="745" y2="462.8" stroke="#6a5a78" stroke-width="1.3" stroke-dasharray="15 3.2 3 3.2"/><line x1="686.3" y1="345" x2="686.3" y2="487" stroke="#333" stroke-width="0.9" stroke-dasharray="12 3 2 3"/><path d="M679.50 351.50 A2.4 2.4 0 0 1 684.41 351.18 A2.4 2.4 0 0 1 689.32 350.86 A2.4 2.4 0 0 1 694.23 350.55 A2.4 2.4 0 0 1 699.14 350.23 A2.4 2.4 0 0 1 704.05 349.91 A2.4 2.4 0 0 1 708.95 349.59 A2.4 2.4 0 0 1 713.86 349.27 A2.4 2.4 0 0 1 718.77 348.95 A2.4 2.4 0 0 1 723.68 348.64 A2.4 2.4 0 0 1 728.59 348.32 A2.4 2.4 0 0 1 733.50 348.00 M733.50 348.00 A2.4 2.4 0 0 1 736.25 351.50 A2.4 2.4 0 0 1 739.00 355.00 M739.00 355.00 A2.4 2.4 0 0 1 739.00 359.84 A2.4 2.4 0 0 1 739.00 364.68 A2.4 2.4 0 0 1 739.00 369.52 A2.4 2.4 0 0 1 739.00 374.36 A2.4 2.4 0 0 1 739.00 379.20 A2.4 2.4 0 0 1 739.00 384.04 A2.4 2.4 0 0 1 739.00 388.88 A2.4 2.4 0 0 1 739.00 393.72 A2.4 2.4 0 0 1 739.00 398.56 A2.4 2.4 0 0 1 739.00 403.40 A2.4 2.4 0 0 1 739.00 408.24 A2.4 2.4 0 0 1 739.00 413.08 A2.4 2.4 0 0 1 739.00 417.92 A2.4 2.4 0 0 1 739.00 422.76 A2.4 2.4 0 0 1 739.00 427.60 A2.4 2.4 0 0 1 739.00 432.44 A2.4 2.4 0 0 1 739.00 437.28 A2.4 2.4 0 0 1 739.00 442.12 A2.4 2.4 0 0 1 739.00 446.96 A2.4 2.4 0 0 1 739.00 451.80 A2.4 2.4 0 0 1 739.00 456.64 A2.4 2.4 0 0 1 739.00 461.48 A2.4 2.4 0 0 1 739.00 466.32 A2.4 2.4 0 0 1 739.00 471.16 A2.4 2.4 0 0 1 739.00 476.00 M739.00 476.00 A2.4 2.4 0 0 1 735.50 479.60 A2.4 2.4 0 0 1 732.00 483.20 M732.00 483.20 A2.4 2.4 0 0 1 727.23 482.85 A2.4 2.4 0 0 1 722.45 482.51 A2.4 2.4 0 0 1 717.68 482.16 A2.4 2.4 0 0 1 712.91 481.82 A2.4 2.4 0 0 1 708.14 481.47 A2.4 2.4 0 0 1 703.36 481.13 A2.4 2.4 0 0 1 698.59 480.78 A2.4 2.4 0 0 1 693.82 480.44 A2.4 2.4 0 0 1 689.05 480.09 A2.4 2.4 0 0 1 684.27 479.75 A2.4 2.4 0 0 1 679.50 479.40 M679.50 479.40 A2.4 2.4 0 0 1 679.50 474.66 A2.4 2.4 0 0 1 679.50 469.93 A2.4 2.4 0 0 1 679.50 465.19 A2.4 2.4 0 0 1 679.50 460.45 A2.4 2.4 0 0 1 679.50 455.71 A2.4 2.4 0 0 1 679.50 450.98 A2.4 2.4 0 0 1 679.50 446.24 A2.4 2.4 0 0 1 679.50 441.50 A2.4 2.4 0 0 1 679.50 436.77 A2.4 2.4 0 0 1 679.50 432.03 A2.4 2.4 0 0 1 679.50 427.29 A2.4 2.4 0 0 1 679.50 422.56 A2.4 2.4 0 0 1 679.50 417.82 A2.4 2.4 0 0 1 679.50 413.08 A2.4 2.4 0 0 1 679.50 408.34 A2.4 2.4 0 0 1 679.50 403.61 A2.4 2.4 0 0 1 679.50 398.87 A2.4 2.4 0 0 1 679.50 394.13 A2.4 2.4 0 0 1 679.50 389.40 A2.4 2.4 0 0 1 679.50 384.66 A2.4 2.4 0 0 1 679.50 379.92 A2.4 2.4 0 0 1 679.50 375.19 A2.4 2.4 0 0 1 679.50 370.45 A2.4 2.4 0 0 1 679.50 365.71 A2.4 2.4 0 0 1 679.50 360.97 A2.4 2.4 0 0 1 679.50 356.24 A2.4 2.4 0 0 1 679.50 351.50 " fill="none" stroke="#6f74c8" stroke-width="1"/><path d="M679.5 351.5 L733.5 348 L739 355 L739 476 L732 483.2 L679.5 479.4 Z" fill="none" stroke="#2a2a60" stroke-width="1.6"/><rect x="675" y="342.5" width="69" height="146.2" fill="none" stroke="#5aa0e0" stroke-width="0.8" stroke-dasharray="1.2 1.2"/><line x1="709" y1="324.5" x2="709" y2="342.5" stroke="#5aa0e0" stroke-width="0.8" stroke-dasharray="1.2 1.2"/><circle cx="709" cy="320.4" r="4" fill="#3c8ad0" stroke="#2a70b0" stroke-width="0.6"/><rect x="671.0" y="338.79999999999995" width="7.2" height="7.2" fill="#3c8ad0" stroke="#2a6aa8" stroke-width="0.6"/><rect x="740.4" y="338.79999999999995" width="7.2" height="7.2" fill="#3c8ad0" stroke="#2a6aa8" stroke-width="0.6"/><rect x="671.0" y="485.09999999999997" width="7.2" height="7.2" fill="#3c8ad0" stroke="#2a6aa8" stroke-width="0.6"/><rect x="740.4" y="485.09999999999997" width="7.2" height="7.2" fill="#3c8ad0" stroke="#2a6aa8" stroke-width="0.6"/><circle cx="680" cy="351.5" r="3.6" fill="#a89a2a" stroke="#6a5e10" stroke-width="0.7"/><circle cx="733.5" cy="347.8" r="3.6" fill="#a89a2a" stroke="#6a5e10" stroke-width="0.7"/><circle cx="739" cy="355" r="3.6" fill="#a89a2a" stroke="#6a5e10" stroke-width="0.7"/><circle cx="739" cy="476" r="3.6" fill="#a89a2a" stroke="#6a5e10" stroke-width="0.7"/><circle cx="732" cy="483.2" r="3.6" fill="#a89a2a" stroke="#6a5e10" stroke-width="0.7"/><circle cx="680" cy="479.5" r="3.6" fill="#a89a2a" stroke="#6a5e10" stroke-width="0.7"/><line x1="629.6" y1="725" x2="1287" y2="725" stroke="#555" stroke-width="1.4"/><rect x="633.4" y="729.1" width="108.2" height="60" fill="none" stroke="#a9b8c2" stroke-width="1.8"/><rect x="635.6" y="731.3" width="103.8" height="60" fill="none" stroke="#d0dae0" stroke-width="0.7"/><text transform="translate(647.4,752.6) scale(0.8,1)" font-size="12.4" fill="#3a6074" stroke="#3a6074" stroke-width="0.55" font-family="Liberation Sans" font-weight="bold" textLength="100.5" lengthAdjust="spacing">BRIGHTER</text><text transform="translate(647.4,765.1) scale(0.8,1)" font-size="12.4" fill="#3a6074" stroke="#3a6074" stroke-width="0.55" font-family="Liberation Sans" font-weight="bold" textLength="100.5" lengthAdjust="spacing">GRAPHICS</text><text x="655.2" y="773.2" font-size="2.8" fill="#55707e" font-family="Liberation Sans" font-weight="bold" textLength="64.7" lengthAdjust="spacingAndGlyphs">DIGITIZING CONSTRUCTION SINCE 2003</text><path d="M747.5 743 H752 V764.3 H768.2 V747.5 H755 V743 H772.7 V768.8 H747.5 Z" fill="#1c7ad6"/><rect x="757" y="750.5" width="8" height="8" fill="#1c7ad6"/><text x="779.3" y="763.2" font-size="22.2" fill="#1c7ad6" stroke="#1c7ad6" stroke-width="0.45" font-family="Liberation Sans" font-weight="bold" textLength="93.2" lengthAdjust="spacingAndGlyphs">BLUEBEAM</text><text x="779.3" y="773.6" font-size="6.8" fill="#222" font-family="Liberation Sans" font-weight="bold" textLength="50.3" lengthAdjust="spacingAndGlyphs">Platinum Partner</text><line x1="881.4" y1="725" x2="881.4" y2="784" stroke="#555" stroke-width="1"/><line x1="963" y1="725" x2="963" y2="784" stroke="#555" stroke-width="1"/><line x1="1044.3" y1="725" x2="1044.3" y2="784" stroke="#555" stroke-width="1"/><line x1="1125.5" y1="725" x2="1125.5" y2="784" stroke="#555" stroke-width="1"/><line x1="1207.5" y1="725" x2="1207.5" y2="784" stroke="#555" stroke-width="1"/><text x="888.5" y="733.98" font-size="6.9" fill="#222" font-family="Liberation Sans" font-weight="bold" textLength="58.5" lengthAdjust="spacingAndGlyphs">Capture Engineers</text><text x="888.5" y="741.48" font-size="6.9" fill="#222" font-family="Liberation Sans">Mechanical</text><text x="888.5" y="748.88" font-size="6.9" fill="#222" font-family="Liberation Sans">Electrical</text><text x="888.5" y="756.28" font-size="6.9" fill="#222" font-family="Liberation Sans">Plumbing</text><text x="888.5" y="770.98" font-size="6.9" fill="#222" font-family="Liberation Sans">1234 Miller St.</text><text x="888.5" y="778.48" font-size="6.9" fill="#222" font-family="Liberation Sans" textLength="68.5" lengthAdjust="spacingAndGlyphs">Manchester, NH 06930</text><text x="972.2" y="733.98" font-size="6.9" fill="#222" font-family="Liberation Sans" font-weight="bold" textLength="62.5" lengthAdjust="spacingAndGlyphs">REVU ARCHITECTS</text><text x="972.2" y="749.18" font-size="6.9" fill="#222" font-family="Liberation Sans">5555 N. Broad St</text><text x="972.2" y="756.28" font-size="6.9" fill="#222" font-family="Liberation Sans" textLength="60.5" lengthAdjust="spacingAndGlyphs">Pasadena CA 91101</text><text x="1050.9" y="733.98" font-size="6.9" fill="#222" font-family="Liberation Sans" font-weight="bold" textLength="58.3" lengthAdjust="spacingAndGlyphs">OFFICE BUILDING</text><text x="1050.9" y="749.18" font-size="6.9" fill="#222" font-family="Liberation Sans" textLength="56" lengthAdjust="spacingAndGlyphs">Project No: 323232</text><text x="1050.9" y="763.88" font-size="6.9" fill="#222" font-family="Liberation Sans">Project Address:</text><text x="1050.9" y="771.28" font-size="6.9" fill="#222" font-family="Liberation Sans">123 Schonsett St</text><text x="1050.9" y="778.38" font-size="6.9" fill="#222" font-family="Liberation Sans" textLength="52.5" lengthAdjust="spacingAndGlyphs">Chicago, IL 60601</text><text x="1130" y="733.69" font-size="3.3" fill="#222" font-family="Liberation Sans" font-weight="bold" textLength="33" lengthAdjust="spacingAndGlyphs">LEGAL DISCLAIMER</text><text x="1130" y="741.49" font-size="3.3" fill="#222" font-family="Liberation Sans" textLength="72" lengthAdjust="spacingAndGlyphs">ALL IDEAS, DESIGNS, AND PLANS INDICATED</text><text x="1130" y="745.24" font-size="3.3" fill="#222" font-family="Liberation Sans" textLength="60.8" lengthAdjust="spacingAndGlyphs">OR REPRESENTED BY THESE DRAWINGS</text><text x="1130" y="748.99" font-size="3.3" fill="#222" font-family="Liberation Sans" textLength="62.699999999999996" lengthAdjust="spacingAndGlyphs">ARE OWNED AND ARE THE PROPERTY OF</text><text x="1130" y="752.74" font-size="3.3" fill="#222" font-family="Liberation Sans" textLength="66.5" lengthAdjust="spacingAndGlyphs">BLUEBEAM, INC. AND WERE CREATED AND</text><text x="1130" y="756.49" font-size="3.3" fill="#222" font-family="Liberation Sans" textLength="51.3" lengthAdjust="spacingAndGlyphs">DEVELOPED FOR DEMONSTRATION</text><text x="1130" y="760.24" font-size="3.3" fill="#222" font-family="Liberation Sans" textLength="64.6" lengthAdjust="spacingAndGlyphs">PURPOSES ONLY. NONE OF SUCH IDEAS,</text><text x="1130" y="763.99" font-size="3.3" fill="#222" font-family="Liberation Sans" textLength="66.5" lengthAdjust="spacingAndGlyphs">DESIGNS, OR PLANS SHALL BE USED FOR</text><text x="1130" y="767.74" font-size="3.3" fill="#222" font-family="Liberation Sans" textLength="64.6" lengthAdjust="spacingAndGlyphs">ANY PURPOSE WHATSOEVER EXCEPT AS A</text><text x="1130" y="771.49" font-size="3.3" fill="#222" font-family="Liberation Sans" textLength="55.099999999999994" lengthAdjust="spacingAndGlyphs">DEMONSTRATION SET WITHOUT THE</text><text x="1130" y="775.24" font-size="3.3" fill="#222" font-family="Liberation Sans" textLength="53.199999999999996" lengthAdjust="spacingAndGlyphs">EXPRESSED WRITTEN CONCENT OF</text><text x="1130" y="778.99" font-size="3.3" fill="#222" font-family="Liberation Sans" textLength="26.599999999999998" lengthAdjust="spacingAndGlyphs">BLUEBEAM, INC.</text><text x="1213" y="729.68" font-size="3" fill="#222" font-family="Liberation Sans" textLength="7.2" lengthAdjust="spacingAndGlyphs">DATE</text><text x="1258" y="729.68" font-size="3" fill="#222" font-family="Liberation Sans" textLength="19.0" lengthAdjust="spacingAndGlyphs">07/04/2016</text><text x="1213" y="733.38" font-size="3" fill="#222" font-family="Liberation Sans" textLength="18.0" lengthAdjust="spacingAndGlyphs">ISSUED FOR</text><text x="1258" y="733.38" font-size="3" fill="#222" font-family="Liberation Sans" textLength="28.5" lengthAdjust="spacingAndGlyphs">INTERNAL REVIEW</text><line x1="1213" y1="734.5" x2="1278" y2="734.5" stroke="#555" stroke-width="0.5"/><line x1="1213" y1="739.5" x2="1278" y2="739.5" stroke="#444" stroke-width="0.8"/><text x="1213" y="742.58" font-size="3" fill="#222" font-family="Liberation Sans" textLength="12.6" lengthAdjust="spacingAndGlyphs">PROJECT</text><text x="1268" y="742.58" font-size="3" fill="#222" font-family="Liberation Sans" textLength="5.4" lengthAdjust="spacingAndGlyphs">XXX</text><line x1="1213" y1="743.3" x2="1278" y2="743.3" stroke="#555" stroke-width="0.6"/><text x="1213" y="746.68" font-size="3" fill="#222" font-family="Liberation Sans" textLength="14.4" lengthAdjust="spacingAndGlyphs">DRAWN BY</text><text x="1268" y="746.68" font-size="3" fill="#222" font-family="Liberation Sans" textLength="10.8" lengthAdjust="spacingAndGlyphs">Author</text><line x1="1213" y1="747.4" x2="1278" y2="747.4" stroke="#555" stroke-width="0.6"/><text x="1213" y="750.78" font-size="3" fill="#222" font-family="Liberation Sans" textLength="18.0" lengthAdjust="spacingAndGlyphs">CHECKED BY</text><text x="1268" y="750.78" font-size="3" fill="#222" font-family="Liberation Sans" textLength="12.6" lengthAdjust="spacingAndGlyphs">Checker</text><line x1="1213" y1="751.5" x2="1278" y2="751.5" stroke="#555" stroke-width="0.6"/><text x="1213" y="754.88" font-size="3" fill="#222" font-family="Liberation Sans" textLength="19.8" lengthAdjust="spacingAndGlyphs">APPROVED BY</text><text x="1268" y="754.88" font-size="3" fill="#222" font-family="Liberation Sans" textLength="14.4" lengthAdjust="spacingAndGlyphs">Approver</text><line x1="1213" y1="755.6" x2="1278" y2="755.6" stroke="#555" stroke-width="0.6"/><rect x="1213" y="757.5" width="65" height="3.5" rx="0.8" fill="none" stroke="#333" stroke-width="0.8"/><line x1="1219" y1="757.5" x2="1219" y2="761" stroke="#333" stroke-width="0.5"/><line x1="1236" y1="757.5" x2="1236" y2="761" stroke="#333" stroke-width="0.5"/></svg><!--endplan-->
<!-- doc scrollbar -->
<div class="a" style="left:1286.6px;top:84.5px;width:15.4px;height:698.5px;background:#efefef"></div>
<div class="a" style="left:1291.2px;top:138px;width:6.6px;height:604.3px;background:#8c8c8c"></div>
<!-- doc bottom toolbar -->
<div class="a" style="left:589px;top:783px;width:713px;height:32px;background:#2e2e2e"></div>
<div class="a" style="left:755.9px;top:783px;width:32.1px;height:31.5px;background:#1e5b8f"></div>
<div class="a" style="left:932px;top:783px;width:11px;height:31.5px;background:#3a3a3a"></div>
<!-- status bar -->
<div class="a" style="left:0;top:815px;width:1340px;height:1px;background:#1a1a1a"></div>
<div class="a" style="left:0;top:816px;width:1340px;height:32px;background:#2e2e2e"></div>
<!-- status bar selected -->
<div class="a" style="left:756.8px;top:816px;width:32.2px;height:32px;background:#1e5b8f"></div>
<div class="a" style="left:789.6px;top:816px;width:32px;height:32px;background:#1e5b8f"></div>

<span class="t" style="left:952.2px;top:792.3px;font-size:12.4px;color:#ececec">106.68 x 76.20 cm</span>
<span class="t" style="left:1070.5px;top:792.6px;font-size:12px;color:#ececec">X: 9.525 cm = 30'-0", Y: 9.525 cm = 30'-0"</span>
<span class="t" style="left:918.7px;top:827px;font-size:11.2px;color:#e6e6e6;letter-spacing:-0.15px">X: 9.525 cm = 30'-0", Y: 9.525 cm = 30'-0"</span>
<span class="t" style="left:1135.5px;top:827px;font-size:11.2px;color:#e6e6e6">106.68 x 76.20 cm</span>
<span class="t" style="left:1259.6px;top:827px;font-size:11.2px;color:#e6e6e6">(1.98, 48.22)</span>
<span class="t" style="left:1px;top:827px;font-size:11.2px;color:#e6e6e6">Drag custom</span>
<span class="t" style="left:210px;top:827px;font-size:11.2px;color:#e6e6e6">to move</span>
<!-- popup -->
<div class="a" style="left:33.2px;top:687.8px;width:174.7px;height:160.7px;border:5.6px solid #f5c03c;background:#3c3c3c"></div>
<div class="a" style="left:38.8px;top:693.4px;width:163.4px;height:18.5px;background:#1e5f96"></div>
<span class="t" style="left:59px;top:695.9px;font-size:11px;color:#e2ecf6">My Tools</span>
<span class="t" style="left:59px;top:718.2px;font-size:11px;color:#e6e6e6">Architect Review</span>
<span class="t" style="left:59px;top:740.5px;font-size:11px;color:#e6e6e6">Contractor Review</span>
<span class="t" style="left:59px;top:762.8px;font-size:11px;color:#e6e6e6">Engineer Review</span>
<span class="t" style="left:59px;top:785.1px;font-size:11px;color:#e6e6e6">General Measurements</span>
<span class="t" style="left:59px;top:807.4px;font-size:11px;color:#e6e6e6">Design Symbols</span>
<span class="t" style="left:59px;top:829.7px;font-size:11px;color:#e6e6e6">Construction Symbols</span>
<svg style="left:181px;top:703.5px" width="12" height="17" viewBox="0 0 12 17"><path d="M1 1 L1 13.5 L4 10.8 L6.3 15.8 L8.4 14.8 L6.2 10 L10.3 10 Z" fill="#fff" stroke="#222" stroke-width="0.9" stroke-linejoin="round"/></svg>
<!--chrome--><svg style="left:0;top:0" width="1340" height="848" viewBox="0 0 1340 848">
<g fill="none" stroke="#e2e2e2" stroke-width="1.25">
<rect x="597.5" y="791.3" width="15" height="15" stroke="#6a6a6a"/><line x1="597.5" y1="793" x2="612.5" y2="793" stroke="#6a6a6a" stroke-width="0.8"/>
<rect x="629.5" y="791.3" width="15.4" height="15.3"/><line x1="637.2" y1="791.3" x2="637.2" y2="806.6"/><line x1="629.5" y1="793" x2="645" y2="793" stroke-width="0.8"/>
<rect x="662" y="791.3" width="15.4" height="15.3"/><line x1="662" y1="799" x2="677.4" y2="799"/><line x1="662" y1="793" x2="677.4" y2="793" stroke-width="0.8"/><line x1="662" y1="800.6" x2="677.4" y2="800.6" stroke-width="0.8"/>
<line x1="688.6" y1="791.2" x2="688.6" y2="807.1" stroke="#6a6a6a" stroke-width="1"/>
<path d="M699.6 791.4 H708 L712.4 795.8 V806.6 H699.6 Z M708 791.4 V795.8 H712.4"/>
<path d="M706 796.5 V805 M701.8 800.8 H710.2" stroke-width="1"/><path d="M704.4 798 L706 796.3 L707.6 798 M704.4 803.4 L706 805.1 L707.6 803.4 M703.3 799.2 L701.6 800.8 L703.3 802.4 M708.7 799.2 L710.4 800.8 L708.7 802.4" stroke-width="0.9"/>
<path d="M732 791.2 V793.6 H744.6 V791.2 M732 807 V797.8 H740.5 L744.6 801.8 V807 M740.5 797.8 V801.8 H744.6"/>
<path d="M733.5 805.3 H743.2 M735 803.8 L733.3 805.3 L735 806.8 M741.7 803.8 L743.4 805.3 L741.7 806.8" stroke-width="1"/>
</g>
<path d="M767.3 807 C766 805 764.6 803.2 764 801.3 C763.6 799.6 765.6 798.6 766.8 800 L768.3 801.8 L767.2 793.2 C767 791.2 769.8 790.8 770.1 792.8 L771 798.6 L771.2 791.6 C771.3 789.6 774.1 789.6 774.2 791.6 L774.3 798.6 L775.4 792.6 C775.8 790.8 778.4 791.2 778.1 793 L777.3 799 L778.8 795.6 C779.5 794 781.6 794.8 781 796.6 L779.3 802.5 C778.5 805.3 777 807 775 807.6 H769.2 C768.4 807.6 767.8 807.4 767.3 807 Z" fill="none" stroke="#dcecfb" stroke-width="1.2" stroke-linejoin="round"/>
<path d="M799 791.8 L809.4 801.2 L804.8 801.8 L807.4 806.2 L805.4 807.2 L802.8 802.8 L799 806 Z" fill="none" stroke="#e2e2e2" stroke-width="1.15" stroke-linejoin="round"/>
<path d="M828.5 790.6 H834.8 M831.6 790.6 V807.4 M828.5 807.4 H834.8" fill="none" stroke="#e2e2e2" stroke-width="1.2"/>
<text x="835.4" y="802.7" font-size="9.5" fill="#e2e2e2" font-family="Liberation Sans">A</text>
<circle cx="865.8" cy="796.8" r="5.3" fill="none" stroke="#e2e2e2" stroke-width="1.2"/><path d="M869.6 800.6 L876.6 807.4 M863.2 795.6 H868.4 M865.8 793 V798.2 M863.2 799.3 H868.4" fill="none" stroke="#e2e2e2" stroke-width="1.1"/>
<path d="M896.3 794.3 V804.2 M905 794.3 L898.6 799.2 L905 804.2 Z" fill="none" stroke="#5a5a5a" stroke-width="1.1"/>
<path d="M934.6 797.6 L938 801.4 L941.4 797.6" fill="none" stroke="#e0e0e0" stroke-width="1.3"/>
<g fill="none" stroke="#e2e2e2" stroke-width="1.2">
<path d="M703.2 823.2 V839.3 M708.1 823.2 V839.3 M713 823.2 V839.3 M699.9 826.5 H716.3 M699.9 831.2 H716.3 M699.9 836 H716.3"/>
<path d="M735.2 823.2 V839.3 M740.1 823.2 V831 M745 823.2 V827.5 M731.9 826.5 H748.5 M731.9 831.2 H741 M731.9 836 H739.5"/>
<path d="M742 831.5 H745 A4 4 0 0 1 745 839.5 H742 M742 834.2 H745 A1.3 1.3 0 0 1 745 836.8 H742" stroke-width="1.1"/>
</g>
<g fill="none" stroke="#dcecfb" stroke-width="1.2">
<path d="M773 840.3 H766.3 V824.2 H773.5 L777.5 828.2 V830 M773.5 824.2 V828.2 H777.5"/>
<path d="M773.5 831.5 H777 A4.3 4.3 0 0 1 777 840.1 H773.5 M773.5 834.2 H777 A1.5 1.5 0 0 1 777 837.2 H773.5" stroke-width="1.1"/>
<path d="M799 836.5 L808.5 825 L812.5 828.5 L806 836 M799 836.5 L797.5 839.5 L801 838.5"/>
<path d="M805 831.5 H808.5 A4.3 4.3 0 0 1 808.5 840.1 H805 M805 834.2 H808.5 A1.5 1.5 0 0 1 808.5 837.2 H805" stroke-width="1.1"/>
</g>
<path d="M831 837 L840.5 825 L845 828.5 L837 837.5 M831 837 L829.5 840 L833 839" fill="none" stroke="#e2e2e2" stroke-width="1.2"/>
<path d="M846.5 834.5 A4.8 4.8 0 1 1 841 830" fill="none" stroke="#3a8ad8" stroke-width="1.6"/><path d="M840 827.5 L843 830.5 L839.5 832" fill="#3a8ad8"/>
<rect x="861.3" y="823.8" width="17" height="16.5" fill="none" stroke="#e2e2e2" stroke-width="1.2"/><line x1="861.3" y1="825.8" x2="878.3" y2="825.8" stroke="#e2e2e2" stroke-width="1"/>
<path d="M864 830.3 H875.5 M872.5 827.8 L875.5 830.3 L872.5 832.8 M875.5 835.3 H864 M867 832.8 L864 835.3 L867 837.8" fill="none" stroke="#e2e2e2" stroke-width="1.1"/>
<path d="M888.6 830.2 L892.3 834 L896 830.2" fill="none" stroke="#e0e0e0" stroke-width="1.3"/>
<g fill="#bdbdbd">
<rect x="1305.00" y="56.5" width="1.3" height="1.3"/>
<rect x="1305.00" y="449.3" width="1.3" height="1.3"/>
<rect x="1307.45" y="56.5" width="1.3" height="1.3"/>
<rect x="1307.45" y="449.3" width="1.3" height="1.3"/>
<rect x="1309.90" y="56.5" width="1.3" height="1.3"/>
<rect x="1309.90" y="449.3" width="1.3" height="1.3"/>
<rect x="1312.35" y="56.5" width="1.3" height="1.3"/>
<rect x="1312.35" y="449.3" width="1.3" height="1.3"/>
<rect x="1314.80" y="56.5" width="1.3" height="1.3"/>
<rect x="1314.80" y="449.3" width="1.3" height="1.3"/>
<rect x="1317.25" y="56.5" width="1.3" height="1.3"/>
<rect x="1317.25" y="449.3" width="1.3" height="1.3"/>
<rect x="1319.70" y="56.5" width="1.3" height="1.3"/>
<rect x="1319.70" y="449.3" width="1.3" height="1.3"/>
<rect x="1322.15" y="56.5" width="1.3" height="1.3"/>
<rect x="1322.15" y="449.3" width="1.3" height="1.3"/>
<rect x="1324.60" y="56.5" width="1.3" height="1.3"/>
<rect x="1324.60" y="449.3" width="1.3" height="1.3"/>
<rect x="1327.05" y="56.5" width="1.3" height="1.3"/>
<rect x="1327.05" y="449.3" width="1.3" height="1.3"/>
<rect x="1329.50" y="56.5" width="1.3" height="1.3"/>
<rect x="1329.50" y="449.3" width="1.3" height="1.3"/>
</g>
<g fill="none" stroke="#e2e2e2" stroke-width="1.25">
<path d="M1309.4 84.2 L1325.9 68.4"/>
<path d="M1309.4 116.5 L1322 104.3"/>
<path d="M1309.5 149 C1310.5 139 1317 133 1326 132.5"/>
<path d="M1309.7 180.6 L1312.8 170.6 L1317.8 174.3 L1320.5 166.2 L1326 162.5" stroke-linejoin="miter"/>
<path d="M1310.5 205.2 H1325.5 M1310.5 200.7 V209.6 M1325.5 200.7 V209.6"/>
<rect x="1309.6" y="231.2" width="16.3" height="12.2"/>
<ellipse cx="1317.7" cy="270" rx="8" ry="6.1"/>
<path d="M1309.6 293.8 H1325.5 L1320 302.2 L1325.5 310 H1309.6 Z"/>
</g>
<path d="M1326.5 99.5 L1319.5 101.3 L1324.7 106.5 Z" fill="#e8e8e8"/>
<path d="M1312.7 205.2 L1315.5 203 V207.4 Z M1323.3 205.2 L1320.5 203 V207.4 Z" fill="#e8e8e8"/>
<path d="M1310.5 326 H1326.5 M1310.5 326 V342" fill="none" stroke="#7a5cc0" stroke-width="1.3"/><line x1="1312.0" y1="324" x2="1312.0" y2="326" stroke="#7a5cc0" stroke-width="0.8"/><line x1="1308.5" y1="328.0" x2="1310.5" y2="328.0" stroke="#7a5cc0" stroke-width="0.8"/><line x1="1314.8" y1="324" x2="1314.8" y2="326" stroke="#7a5cc0" stroke-width="0.8"/><line x1="1308.5" y1="330.6" x2="1310.5" y2="330.6" stroke="#7a5cc0" stroke-width="0.8"/><line x1="1317.6" y1="324" x2="1317.6" y2="326" stroke="#7a5cc0" stroke-width="0.8"/><line x1="1308.5" y1="333.2" x2="1310.5" y2="333.2" stroke="#7a5cc0" stroke-width="0.8"/><line x1="1320.4" y1="324" x2="1320.4" y2="326" stroke="#7a5cc0" stroke-width="0.8"/><line x1="1308.5" y1="335.8" x2="1310.5" y2="335.8" stroke="#7a5cc0" stroke-width="0.8"/><line x1="1323.2" y1="324" x2="1323.2" y2="326" stroke="#7a5cc0" stroke-width="0.8"/><line x1="1308.5" y1="338.4" x2="1310.5" y2="338.4" stroke="#7a5cc0" stroke-width="0.8"/><line x1="1326.0" y1="324" x2="1326.0" y2="326" stroke="#7a5cc0" stroke-width="0.8"/><line x1="1308.5" y1="341.0" x2="1310.5" y2="341.0" stroke="#7a5cc0" stroke-width="0.8"/>
<path d="M1310.5 359 H1326.5 M1310.5 359 V375" fill="none" stroke="#7a5cc0" stroke-width="1.3"/><line x1="1312.0" y1="357" x2="1312.0" y2="359" stroke="#7a5cc0" stroke-width="0.8"/><line x1="1308.5" y1="361.0" x2="1310.5" y2="361.0" stroke="#7a5cc0" stroke-width="0.8"/><line x1="1314.8" y1="357" x2="1314.8" y2="359" stroke="#7a5cc0" stroke-width="0.8"/><line x1="1308.5" y1="363.6" x2="1310.5" y2="363.6" stroke="#7a5cc0" stroke-width="0.8"/><line x1="1317.6" y1="357" x2="1317.6" y2="359" stroke="#7a5cc0" stroke-width="0.8"/><line x1="1308.5" y1="366.2" x2="1310.5" y2="366.2" stroke="#7a5cc0" stroke-width="0.8"/><line x1="1320.4" y1="357" x2="1320.4" y2="359" stroke="#7a5cc0" stroke-width="0.8"/><line x1="1308.5" y1="368.8" x2="1310.5" y2="368.8" stroke="#7a5cc0" stroke-width="0.8"/><line x1="1323.2" y1="357" x2="1323.2" y2="359" stroke="#7a5cc0" stroke-width="0.8"/><line x1="1308.5" y1="371.4" x2="1310.5" y2="371.4" stroke="#7a5cc0" stroke-width="0.8"/><line x1="1326.0" y1="357" x2="1326.0" y2="359" stroke="#7a5cc0" stroke-width="0.8"/><line x1="1308.5" y1="374.0" x2="1310.5" y2="374.0" stroke="#7a5cc0" stroke-width="0.8"/>
<path d="M1310.5 392 H1326.5 M1310.5 392 V408" fill="none" stroke="#7a5cc0" stroke-width="1.3"/><line x1="1312.0" y1="390" x2="1312.0" y2="392" stroke="#7a5cc0" stroke-width="0.8"/><line x1="1308.5" y1="394.0" x2="1310.5" y2="394.0" stroke="#7a5cc0" stroke-width="0.8"/><line x1="1314.8" y1="390" x2="1314.8" y2="392" stroke="#7a5cc0" stroke-width="0.8"/><line x1="1308.5" y1="396.6" x2="1310.5" y2="396.6" stroke="#7a5cc0" stroke-width="0.8"/><line x1="1317.6" y1="390" x2="1317.6" y2="392" stroke="#7a5cc0" stroke-width="0.8"/><line x1="1308.5" y1="399.2" x2="1310.5" y2="399.2" stroke="#7a5cc0" stroke-width="0.8"/><line x1="1320.4" y1="390" x2="1320.4" y2="392" stroke="#7a5cc0" stroke-width="0.8"/><line x1="1308.5" y1="401.8" x2="1310.5" y2="401.8" stroke="#7a5cc0" stroke-width="0.8"/><line x1="1323.2" y1="390" x2="1323.2" y2="392" stroke="#7a5cc0" stroke-width="0.8"/><line x1="1308.5" y1="404.4" x2="1310.5" y2="404.4" stroke="#7a5cc0" stroke-width="0.8"/><line x1="1326.0" y1="390" x2="1326.0" y2="392" stroke="#7a5cc0" stroke-width="0.8"/><line x1="1308.5" y1="407.0" x2="1310.5" y2="407.0" stroke="#7a5cc0" stroke-width="0.8"/>
<path d="M1310.5 424.5 H1326.5 M1310.5 424.5 V440.5" fill="none" stroke="#7a5cc0" stroke-width="1.3"/><line x1="1312.0" y1="422.5" x2="1312.0" y2="424.5" stroke="#7a5cc0" stroke-width="0.8"/><line x1="1308.5" y1="426.5" x2="1310.5" y2="426.5" stroke="#7a5cc0" stroke-width="0.8"/><line x1="1314.8" y1="422.5" x2="1314.8" y2="424.5" stroke="#7a5cc0" stroke-width="0.8"/><line x1="1308.5" y1="429.1" x2="1310.5" y2="429.1" stroke="#7a5cc0" stroke-width="0.8"/><line x1="1317.6" y1="422.5" x2="1317.6" y2="424.5" stroke="#7a5cc0" stroke-width="0.8"/><line x1="1308.5" y1="431.7" x2="1310.5" y2="431.7" stroke="#7a5cc0" stroke-width="0.8"/><line x1="1320.4" y1="422.5" x2="1320.4" y2="424.5" stroke="#7a5cc0" stroke-width="0.8"/><line x1="1308.5" y1="434.3" x2="1310.5" y2="434.3" stroke="#7a5cc0" stroke-width="0.8"/><line x1="1323.2" y1="422.5" x2="1323.2" y2="424.5" stroke="#7a5cc0" stroke-width="0.8"/><line x1="1308.5" y1="436.9" x2="1310.5" y2="436.9" stroke="#7a5cc0" stroke-width="0.8"/><line x1="1326.0" y1="422.5" x2="1326.0" y2="424.5" stroke="#7a5cc0" stroke-width="0.8"/><line x1="1308.5" y1="439.5" x2="1310.5" y2="439.5" stroke="#7a5cc0" stroke-width="0.8"/>
<path d="M1314 340.5 V334 L1319.5 328.5 H1325 V340.5 Z" fill="none" stroke="#e2e2e2" stroke-width="1.1"/>
<rect x="1312.7" y="339.2" width="2.6" height="2.6" fill="#fff"/>
<rect x="1312.7" y="332.7" width="2.6" height="2.6" fill="#fff"/>
<rect x="1318.2" y="327.2" width="2.6" height="2.6" fill="#fff"/>
<rect x="1323.7" y="327.2" width="2.6" height="2.6" fill="#fff"/>
<rect x="1323.7" y="339.2" width="2.6" height="2.6" fill="#fff"/>
<path d="M1314 374.5 V366.5 L1320 360.5 H1325.5 V374.5 Z" fill="none" stroke="#e2e2e2" stroke-width="1.2"/>
<path d="M1314 400 H1325.5 M1314 396.5 V403.5 M1325.5 396.5 V403.5" fill="none" stroke="#e2e2e2" stroke-width="1.2"/><path d="M1316 400 L1318.8 398 V402 Z M1323.5 400 L1320.7 398 V402 Z" fill="#eee"/>
<path d="M1315 436 L1318 428 M1317.8 436 L1320.8 428 M1320.6 436 L1323.6 428 M1323.4 436 L1326.4 428 M1313 433 H1327" fill="none" stroke="#e2e2e2" stroke-width="1.1"/>
<rect x="1312.4" y="461.8" width="16.6" height="16.4" fill="none" stroke="#e2e2e2" stroke-width="1.2"/>
<text x="1316.6" y="474.5" font-size="10" font-weight="bold" fill="#e2e2e2" font-family="Liberation Sans">A</text>
<path d="M1313 510.5 L1317.5 503 L1323 506.5 L1320 510.5 Z" fill="none" stroke="#f0f0f0" stroke-width="1.1"/><path d="M1317.5 503 L1320.5 498.5 L1326.5 503 L1323 506.5 M1320.5 498.5 L1323 495 M1324 500.5 L1327 496.5 M1326.5 503 L1329 504.5" fill="none" stroke="#c8b23e" stroke-width="1.2"/>
<path d="M1314 541.5 L1318 535 L1326 528 M1318 535 L1321 538.5 L1328.5 532 M1321 538.5 L1314 541.5 M1322.5 531.2 L1324.5 525.5" fill="none" stroke="#2d7fd0" stroke-width="1.4"/><circle cx="1314.2" cy="541.4" r="1.3" fill="#fff"/>
<rect x="1312.6" y="558.5" width="13.5" height="7.6" fill="none" stroke="#e2e2e2" stroke-width="1.2"/><path d="M1312.5 573 q1.5 -2 3 0 t3 0 t3 0 t3 0 l3 -3 l-3.5 -3.5" fill="none" stroke="#e2e2e2" stroke-width="1.1"/>
<path d="M9.00 2.80 A2.6 2.6 0 0 1 13.38 4.62 A2.6 2.6 0 0 1 15.20 9.00 A2.6 2.6 0 0 1 13.38 13.38 A2.6 2.6 0 0 1 9.00 15.20 A2.6 2.6 0 0 1 4.62 13.38 A2.6 2.6 0 0 1 2.80 9.00 A2.6 2.6 0 0 1 4.62 4.62 A2.6 2.6 0 0 1 9.00 2.80 Z" transform="translate(1311.3,588.5) scale(0.98)" fill="none" stroke="#e2e2e2" stroke-width="1.2"/>
<rect x="1312.6" y="622.7" width="13.5" height="7.5" fill="none" stroke="#e2e2e2" stroke-width="1.2"/><path d="M1324 630.2 L1327 633.5 L1323 637.5" fill="none" stroke="#e2e2e2" stroke-width="1.2"/><path d="M1321 639.7 L1322 634.5 L1326.2 638.5 Z" fill="#eee"/>
<path d="M1315 665 H1324.5 V660.5 C1320.8 660 1320.8 659 1320.8 658.5 A2.9 2.9 0 1 0 1318.8 658.5 C1318.8 659 1318.8 660 1315 660.5 Z M1309.5 665 H1326.5 V669 H1309.5 Z M1309.5 671.5 H1326.5" fill="none" stroke="#e2e2e2" stroke-width="1.15"/>
<path d="M1329.6 662 L1333 665.3 L1336.4 662" fill="none" stroke="#e0e0e0" stroke-width="1.2"/>
<rect x="1312.4" y="688.7" width="16.6" height="14" fill="none" stroke="#e2e2e2" stroke-width="1.2"/><circle cx="1318.3" cy="692.7" r="1.5" fill="#e2e2e2"/><path d="M1313 701 L1318 696.5 L1321.5 699 L1325 695 L1328.8 699" fill="none" stroke="#e2e2e2" stroke-width="1.1"/>
<path d="M1315.6 717.5 V726.5 M1311 722 H1320" fill="none" stroke="#e2e2e2" stroke-width="1.2"/><path d="M1318.8 720.2 H1329 V736.7 H1315.6 V725" fill="none" stroke="#e2e2e2" stroke-width="1.4" stroke-dasharray="1.6 1.8"/>
</svg><!--endchrome-->
</body></html>
